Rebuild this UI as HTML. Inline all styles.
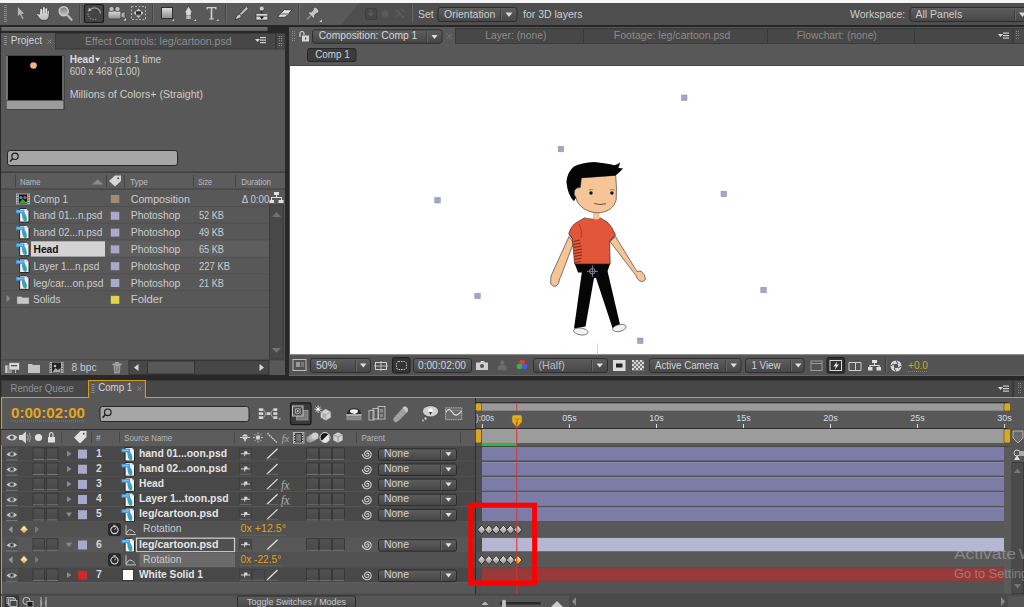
<!DOCTYPE html>
<html><head><meta charset="utf-8">
<style>
*{margin:0;padding:0;box-sizing:border-box}
html,body{width:1024px;height:607px;overflow:hidden;background:#282828}
svg{position:absolute;left:0;top:0;display:block}
text{font-family:"Liberation Sans",sans-serif;font-size:10.5px}
.b{font-weight:bold}
</style></head><body>
<svg width="1024" height="607" viewBox="0 0 1024 607">
<defs>
 <linearGradient id="btn" x1="0" y1="0" x2="0" y2="1"><stop offset="0" stop-color="#5e5e5e"/><stop offset="1" stop-color="#464646"/></linearGradient>
 <linearGradient id="ig" x1="0" y1="0" x2="0" y2="1"><stop offset="0" stop-color="#e0e0e0"/><stop offset="1" stop-color="#8a8a8a"/></linearGradient>
 <g id="psdi">
  <path d="M3.6 1H10.3L13 3.7V14.5H3.6Z" fill="#f2f2f2" stroke="#1a1a1a" stroke-width="0.9"/>
  <path d="M10.3 1V3.7H13Z" fill="#c8c8c8"/>
  <path d="M6 3.5Q9.5 5 10.5 9Q11.5 12.5 9.5 14Q7 13.5 6.3 10Q5.5 6.5 6 3.5Z" fill="#3f9fe0"/>
  <path d="M7.5 8Q9.5 10 9.8 13.2" stroke="#35b060" stroke-width="1.6" fill="none"/>
  <rect x="0" y="2.2" width="8.5" height="3.6" fill="#3d9be0"/>
  <rect x="1" y="3.2" width="6.3" height="1.4" fill="#9fd0f4" opacity="0.7"/>
 </g>
 <linearGradient id="box" x1="0" y1="0" x2="0" y2="1"><stop offset="0" stop-color="#525252"/><stop offset="1" stop-color="#474747"/></linearGradient>
 <linearGradient id="kf" x1="0" y1="0" x2="0" y2="1"><stop offset="0" stop-color="#e8e8e8"/><stop offset="1" stop-color="#8c8c8c"/></linearGradient>
 <linearGradient id="kfy" x1="0" y1="0" x2="0" y2="1"><stop offset="0" stop-color="#fff2a0"/><stop offset="1" stop-color="#e0a000"/></linearGradient>
 <linearGradient id="kfg" x1="0" y1="0" x2="0" y2="1"><stop offset="0" stop-color="#fff6d0"/><stop offset="0.5" stop-color="#f0d890"/><stop offset="1" stop-color="#b08a30"/></linearGradient>
</defs>
<g fill="#cdcdcd">
<rect width="1024" height="607" fill="#282828"/>
<!-- ============ TOP STRIP + TOOLBAR ============ -->
<rect x="0" y="0" width="1024" height="3" fill="#f6f6f6"/>
<rect x="0" y="3" width="1024" height="22" fill="#4e4e4e"/>
<path d="M0 3H359L341 25H0Z" fill="#595959"/>
<rect x="0" y="25" width="1024" height="2" fill="#262626"/>
<!-- gripper -->
<g fill="#8a8a8a"><rect x="4" y="5" width="3" height="1"/><rect x="4" y="7" width="3" height="1"/><rect x="4" y="9" width="3" height="1"/><rect x="4" y="11" width="3" height="1"/><rect x="4" y="13" width="3" height="1"/><rect x="4" y="15" width="3" height="1"/><rect x="4" y="17" width="3" height="1"/><rect x="4" y="19" width="3" height="1"/><rect x="4" y="21" width="3" height="1"/></g>
<!-- arrow -->
<path d="M17.5 6.3V17L19.8 14.8L22.3 19.6L24 18.8L21.6 14H24.9Z" fill="#b4b4b4" stroke="#404040" stroke-width="0.5"/>
<!-- hand -->
<linearGradient id="hg" x1="0" y1="0" x2="0" y2="1"><stop offset="0" stop-color="#f2f2f2"/><stop offset="1" stop-color="#b4b4b4"/></linearGradient>
<path d="M36.3 14.3Q37.3 12.8 39.3 14.2L40 9.5Q40.2 8 41.5 8.2Q42.5 8.5 42.5 9.8L42.7 7.5Q43 6.5 44.1 6.6Q45.2 6.8 45.2 8L45.3 8.5Q45.7 7.6 46.8 7.8Q47.8 8.1 47.7 9.3L47.6 11Q48 10.2 48.9 10.4Q49.8 10.8 49.6 12L48.9 16.5Q48.3 20.6 44 20.6Q41 20.6 39.6 18.8Z" fill="url(#hg)" stroke="#2a2a2a" stroke-width="0.7"/>
<path d="M42.5 9.8V13.5M45.2 8V13.2M47.6 11V13.8" stroke="#555" stroke-width="0.6"/>
<!-- magnifier -->
<linearGradient id="mg" x1="0" y1="0" x2="0" y2="1"><stop offset="0" stop-color="#7a7a7a"/><stop offset="1" stop-color="#c4c4c4"/></linearGradient>
<circle cx="63.7" cy="11.2" r="4.5" fill="url(#mg)" stroke="#c6c6c6" stroke-width="1.6"/>
<path d="M67.2 14.9L71.6 19.8" stroke="#b8b8b8" stroke-width="2.2" stroke-linecap="round"/>
<!-- separators -->
<g stroke="#454545" stroke-width="1"><path d="M79.5 4.5V23"/><path d="M152.5 4.5V23"/><path d="M225.5 4.5V23"/><path d="M298.5 4.5V23"/><path d="M411.5 4.5V23"/></g>
<g stroke="#6a6a6a" stroke-width="1"><path d="M80.5 4.5V23"/><path d="M153.5 4.5V23"/><path d="M226.5 4.5V23"/><path d="M299.5 4.5V23"/><path d="M412.5 4.5V23"/></g>
<!-- rotate selected -->
<rect x="84.5" y="4.5" width="19" height="18" rx="2" fill="#434343" stroke="#1c1c1c" stroke-width="1.2"/>
<path d="M90 9.5Q93.5 6.8 97.5 8.5Q100.5 10.5 100.5 13.5" fill="none" stroke="#9a9a9a" stroke-width="1.3"/>
<path d="M88 13.5Q88 16.5 90.5 18.5Q94 20.3 97.5 18.5" fill="none" stroke="#8a8a8a" stroke-width="1.3" stroke-dasharray="1.3 1.3"/>
<path d="M88 11.5L89 8L91.5 10.2Z" fill="#c8c8c8"/>
<!-- camera -->
<rect x="108" y="11" width="13" height="8" rx="2" fill="url(#ig)" stroke="#333" stroke-width="0.6"/>
<circle cx="111.5" cy="9" r="2.6" fill="#bdbdbd" stroke="#333" stroke-width="0.6"/>
<circle cx="117.5" cy="9" r="2.6" fill="#bdbdbd" stroke="#333" stroke-width="0.6"/>
<path d="M121 13L125 11.5V18.5L121 17Z" fill="#aaa" stroke="#333" stroke-width="0.6"/>
<path d="M123.5 20.5H126V18" fill="#ddd"/>
<!-- pan behind -->
<rect x="131.5" y="6.5" width="14" height="13" fill="none" stroke="#b0b0b0" stroke-dasharray="2 1.5"/>
<path d="M138.5 8.5L141 11H136Z M138.5 18L141 15.5H136Z M133.5 13L136 10.8V15.2Z M143.5 13L141 10.8V15.2Z" fill="#c8c8c8"/>
<rect x="136" y="12" width="5" height="2" fill="#2a2a2a"/>
<!-- rect tool -->
<rect x="161.5" y="7.5" width="11" height="11" fill="url(#ig)" stroke="#2e2e2e"/>
<path d="M172 21L174 19V21Z" fill="#ddd"/>
<!-- pen -->
<path d="M188.5 6L191.8 11.5L190.8 16H186.2L185.2 11.5Z" fill="#d6d6d6" stroke="#333" stroke-width="0.6"/>
<rect x="186.2" y="16" width="4.6" height="3" fill="#bbb"/>
<path d="M194 21L196 19V21Z" fill="#ddd"/>
<!-- T -->
<path d="M206.5 7H216.5V9.5H215.5L215 8.2H212.3V18.5H213.8V19.5H209.2V18.5H210.7V8.2H208L207.5 9.5H206.5Z" fill="#cfcfcf"/>
<path d="M216.5 21L218.5 19V21Z" fill="#ddd"/>
<!-- brush -->
<linearGradient id="brg" x1="0" y1="0" x2="1" y2="1"><stop offset="0" stop-color="#e8e8e8"/><stop offset="1" stop-color="#8a8a8a"/></linearGradient>
<path d="M246.3 6.6L248.6 8.7L241.2 15.6L239.4 13.9Z" fill="url(#brg)" stroke="#2a2a2a" stroke-width="0.6"/>
<path d="M239.2 13.7L241.5 15.9Q240.5 18.8 235 19.5Q236 15.5 239.2 13.7Z" fill="#c8c8c8" stroke="#1e1e1e" stroke-width="0.7"/>
<!-- stamp -->
<circle cx="261.7" cy="8.6" r="2.5" fill="#cfcfcf" stroke="#2a2a2a" stroke-width="0.6"/>
<rect x="260.9" y="10.8" width="1.6" height="2.8" fill="#2a2a2a"/>
<path d="M256 13.7H267.8V16.2H256Z" fill="#eeeeee" stroke="#2a2a2a" stroke-width="0.6"/>
<path d="M256 16.2H267.8V20H256Z" fill="#d8d8d8" stroke="#2a2a2a" stroke-width="0.6"/>
<path d="M259.5 16.4L261.8 19.2L264.2 16.4Z" fill="#111"/>
<!-- eraser -->
<path d="M277.3 17.2L284.2 9.8H292.2L285.3 17.2Z" fill="#f0f0f0" stroke="#222" stroke-width="0.8"/>
<path d="M279.2 15.2L281.5 12.8H289.5L287.2 15.2Z" fill="#9c9c9c"/>
<!-- pin -->
<path d="M313 7.5Q315.5 6.5 317.5 8.5Q319.5 10.5 318.5 13L316.5 13.2L314.5 15.3L314.8 17.5L313.5 18.3L308.3 13.1L309 11.8L311.3 12L313.4 10Z" fill="#c4c4c4" stroke="#2a2a2a" stroke-width="0.6"/>
<path d="M310.8 15.6L307 19.4" stroke="#9a9a9a" stroke-width="1.3"/>
<path d="M319.3 22L321.8 19.6V22Z" fill="#dedede"/>
<!-- disabled icons -->
<rect x="365.5" y="8.5" width="11" height="11" rx="1.5" fill="#474747" stroke="#3e3e3e"/>
<path d="M371 9.5V15M368.5 13L371 15.5L373.5 13" stroke="#5e5e5e" stroke-width="1.2" fill="none"/>
<circle cx="385" cy="14" r="3.6" fill="#5a5a5a"/>
<path d="M396 10L404 18M396 17L400 13M401 9L404 12" stroke="#5c5c5c" stroke-width="1.6"/>
<!-- Set / Orientation -->
<text x="418" y="18">Set</text>
<rect x="438" y="7.5" width="79" height="14" rx="2.5" fill="url(#btn)" stroke="#2c2c2c"/>
<path d="M500.5 9V20.5" stroke="#3e3e3e"/><path d="M501.5 9V20.5" stroke="#646464"/>
<text x="444" y="18">Orientation</text>
<path d="M505.5 12.5H512.5L509 17Z" fill="#d8d8d8"/>
<text x="523" y="18">for 3D layers</text>
<text x="850" y="18">Workspace:</text>
<rect x="910" y="7.5" width="120" height="14" rx="2.5" fill="url(#btn)" stroke="#2c2c2c"/>
<path d="M1014.5 9V20.5" stroke="#3e3e3e"/><path d="M1015.5 9V20.5" stroke="#646464"/>
<text x="915.5" y="18">All Panels</text>
<path d="M1019 12.5H1026L1022.5 17Z" fill="#d8d8d8"/>

<!-- ============ gray bar ============ -->
<rect x="1.5" y="27.3" width="266" height="3.5" fill="#6a6a6a"/><rect x="1.5" y="27.3" width="266" height="0.8" fill="#7a7a7a"/>

<!-- PLACEHOLDER PANELS -->
<!-- ============ PROJECT PANEL ============ -->
<rect x="1" y="33" width="284" height="342" fill="#585858"/>
<!-- tabs -->
<rect x="1" y="33" width="54" height="16" fill="#585858"/>
<rect x="55.5" y="33.5" width="220" height="15.5" fill="#474747" stroke="#393939"/>
<g fill="#8a8a8a"><rect x="4" y="36" width="3" height="1"/><rect x="4" y="38" width="3" height="1"/><rect x="4" y="40" width="3" height="1"/><rect x="4" y="42" width="3" height="1"/><rect x="4" y="44" width="3" height="1"/></g>
<text x="10.7" y="44" textLength="31.3" lengthAdjust="spacingAndGlyphs" fill="#cfd3d8">Project</text>
<path d="M47.5 39.5L51.5 43.5M51.5 39.5L47.5 43.5" stroke="#8c8c8c" stroke-width="0.9"/>
<text x="85" y="44.5" textLength="146.5" lengthAdjust="spacingAndGlyphs" fill="#8e8e8e">Effect Controls: leg/cartoon.psd</text>
<path d="M255 39H260L257.5 42Z" fill="#dcdcdc"/>
<g fill="#d0d0d0"><rect x="260" y="37" width="6" height="1.2"/><rect x="260" y="39.5" width="6" height="1.2"/><rect x="260" y="42" width="6" height="1.2"/></g>
<rect x="276.5" y="33.5" width="8.5" height="15.5" fill="#4a4a4a" stroke="#3a3a3a"/>
<g fill="#8a8a8a"><rect x="279" y="36" width="1" height="1"/><rect x="281" y="36" width="1" height="1"/><rect x="279" y="38" width="1" height="1"/><rect x="281" y="38" width="1" height="1"/><rect x="279" y="40" width="1" height="1"/><rect x="281" y="40" width="1" height="1"/><rect x="279" y="43" width="1" height="1"/><rect x="281" y="43" width="1" height="1"/><rect x="279" y="45" width="1" height="1"/><rect x="281" y="45" width="1" height="1"/></g>
<!-- thumbnail -->
<rect x="6" y="55.5" width="58.5" height="54" fill="#2e2e2e"/>
<rect x="6.5" y="56" width="57" height="44.5" fill="#000"/>
<rect x="6.5" y="56" width="1" height="44" fill="#d8d8d8"/>
<rect x="62.5" y="56" width="1" height="44" fill="#bdbdbd"/>
<rect x="6.5" y="100.5" width="57" height="8.5" fill="#9c9c9c"/>
<circle cx="33.5" cy="65.5" r="3.3" fill="#f1b57d"/>
<!-- info -->
<text x="69.7" y="62.8" class="b" textLength="24.7" lengthAdjust="spacingAndGlyphs" fill="#dcdcdc">Head</text>
<path d="M95 57.8H100L97.5 61.5Z" fill="#e4e4e4"/>
<text x="103.7" y="62.8" textLength="57.5" lengthAdjust="spacingAndGlyphs">, used 1 time</text>
<text x="69.7" y="74.7" textLength="70.3" lengthAdjust="spacingAndGlyphs">600 x 468 (1.00)</text>
<text x="69.7" y="97.7" textLength="133.3" lengthAdjust="spacingAndGlyphs">Millions of Colors+ (Straight)</text>
<!-- search -->
<rect x="7.5" y="150.5" width="170" height="15" rx="2.5" fill="#a6a6a6" stroke="#262626"/>
<circle cx="15" cy="156.3" r="3.2" fill="none" stroke="#1e1e1e" stroke-width="1.2"/>
<path d="M12.7 158.8L10 161.5" stroke="#1e1e1e" stroke-width="1.5"/>
<!-- list header -->
<rect x="1" y="171.5" width="284" height="1.2" fill="#3a3a3a"/>
<rect x="1" y="173" width="284" height="16" fill="#5c5c5c"/>
<rect x="1" y="188.5" width="284" height="1" fill="#3e3e3e"/>
<g stroke="#444"><path d="M15.5 175V187M106.5 175V187M124.5 175V187M193.5 175V187M235.5 175V187"/></g>
<g fill="#b9bcc0"><text x="20" y="184.5" textLength="20.5" lengthAdjust="spacingAndGlyphs" style="font-size:9.5px">Name</text><text x="130" y="184.5" style="font-size:9.5px" textLength="18" lengthAdjust="spacingAndGlyphs">Type</text><text x="198" y="184.5" style="font-size:9.5px" textLength="14" lengthAdjust="spacingAndGlyphs">Size</text><text x="241.2" y="184.5" style="font-size:9.5px" textLength="29.8" lengthAdjust="spacingAndGlyphs">Duration</text></g>
<path d="M92 184.5L97.5 179.5L103.5 184.5Z" fill="#8c8c8c"/>
<path d="M109 181L115 175.5H121V181L115 186.5Z" fill="#d6d6d6"/><circle cx="118.2" cy="178.2" r="1" fill="#555"/>
<!-- rows -->
<g fill="#4d4d4d"><rect x="1" y="206" width="268" height="0.8"/><rect x="1" y="222.8" width="268" height="0.8"/><rect x="1" y="239.7" width="268" height="0.8"/><rect x="1" y="256.6" width="268" height="0.8"/><rect x="1" y="273.5" width="268" height="0.8"/><rect x="1" y="290.3" width="268" height="0.8"/><rect x="1" y="307.1" width="268" height="0.8"/></g>
<rect x="1" y="240.5" width="268" height="16.2" fill="#5e5e5e"/>
<rect x="31" y="241.3" width="74" height="15.3" fill="#d3d3d3"/>
<!-- comp icon -->
<rect x="16" y="193.6" width="14" height="10.7" fill="#b8b8b8"/>
<g fill="#555"><rect x="16.8" y="194.5" width="1.2" height="1.2"/><rect x="16.8" y="197" width="1.2" height="1.2"/><rect x="16.8" y="199.5" width="1.2" height="1.2"/><rect x="16.8" y="202" width="1.2" height="1.2"/><rect x="28" y="194.5" width="1.2" height="1.2"/><rect x="28" y="197" width="1.2" height="1.2"/><rect x="28" y="199.5" width="1.2" height="1.2"/><rect x="28" y="202" width="1.2" height="1.2"/></g>
<rect x="18.8" y="194.4" width="8.4" height="9.2" fill="#151515"/><circle cx="21" cy="197.5" r="1.6" fill="#3a8ee0"/><circle cx="25" cy="197.5" r="1.6" fill="#e04a2a"/><path d="M18.8 203.6L22.5 199L26 202L27.2 201V203.6Z" fill="#2aaa3a"/>
<g fill="#cdcdcd">
<text x="33.4" y="202.5" textLength="34.5" lengthAdjust="spacingAndGlyphs">Comp 1</text>
<text x="33.4" y="219.3" textLength="69" lengthAdjust="spacingAndGlyphs">hand 01...n.psd</text>
<text x="33.4" y="236.1" textLength="69" lengthAdjust="spacingAndGlyphs">hand 02...n.psd</text>
<text x="33.4" y="269.8" textLength="66" lengthAdjust="spacingAndGlyphs">Layer 1...n.psd</text>
<text x="33.4" y="286.6" textLength="70" lengthAdjust="spacingAndGlyphs">leg/car...on.psd</text>
<text x="33" y="303.4" textLength="27.5" lengthAdjust="spacingAndGlyphs">Solids</text>
<text x="130.8" y="202.5" textLength="59" lengthAdjust="spacingAndGlyphs">Composition</text>
<text x="130.8" y="219.3" textLength="49.5" lengthAdjust="spacingAndGlyphs">Photoshop</text>
<text x="130.8" y="236.1" textLength="49.5" lengthAdjust="spacingAndGlyphs">Photoshop</text>
<text x="130.8" y="253" textLength="49.5" lengthAdjust="spacingAndGlyphs">Photoshop</text>
<text x="130.8" y="269.8" textLength="49.5" lengthAdjust="spacingAndGlyphs">Photoshop</text>
<text x="130.8" y="286.6" textLength="49.5" lengthAdjust="spacingAndGlyphs">Photoshop</text>
<text x="130.8" y="303.4" textLength="32" lengthAdjust="spacingAndGlyphs">Folder</text>
<text x="199" y="219.3" textLength="25" lengthAdjust="spacingAndGlyphs">52 KB</text>
<text x="199" y="236.1" textLength="25" lengthAdjust="spacingAndGlyphs">49 KB</text>
<text x="199" y="253" textLength="25" lengthAdjust="spacingAndGlyphs">65 KB</text>
<text x="199" y="269.8" textLength="31" lengthAdjust="spacingAndGlyphs">227 KB</text>
<text x="199" y="286.6" textLength="25" lengthAdjust="spacingAndGlyphs">21 KB</text>
<text x="241.8" y="202.5" textLength="27.5" lengthAdjust="spacingAndGlyphs">Δ 0:00</text>
</g>
<text x="33.5" y="253" class="b" fill="#111" textLength="25" lengthAdjust="spacingAndGlyphs">Head</text>
<g><rect x="110.8" y="195" width="8.5" height="8" fill="#a38a70"/>
<rect x="110.8" y="211.8" width="8.5" height="8" fill="#a9a9c9"/>
<rect x="110.8" y="228.6" width="8.5" height="8" fill="#a9a9c9"/>
<rect x="110.8" y="245.4" width="8.5" height="8" fill="#a9a9c9"/>
<rect x="110.8" y="262.2" width="8.5" height="8" fill="#a9a9c9"/>
<rect x="110.8" y="279" width="8.5" height="8" fill="#a9a9c9"/>
<rect x="110.8" y="295.8" width="8.5" height="8" fill="#e3d44a"/></g>
<!-- psd icons -->
<use href="#psdi" x="16" y="207.5"/><use href="#psdi" x="16" y="224.3"/><use href="#psdi" x="16" y="241.2"/><use href="#psdi" x="16" y="258"/><use href="#psdi" x="16" y="274.8"/>
<!-- solids folder -->
<path d="M6.5 295L10.5 298.5L6.5 302Z" fill="#8a8a8a"/>
<path d="M17 296.5H21.5L22.5 297.5H29V304H17Z" fill="#c8c8c8" stroke="#777" stroke-width="0.5"/>
<!-- flowchart icon -->
<g fill="#e0e0e0"><rect x="274" y="192" width="5" height="3"/><rect x="276" y="195" width="1" height="2"/><rect x="271" y="197" width="11" height="1"/><rect x="271" y="197" width="1" height="3"/><rect x="281" y="197" width="1" height="3"/><rect x="269.5" y="200" width="4.5" height="3"/><rect x="278.5" y="200" width="5" height="3"/></g>
<!-- v scrollbar -->
<rect x="269.5" y="205" width="14" height="154" fill="#484848" stroke="#3a3a3a"/>
<path d="M272 217L276.5 212L281 217Z" fill="#707070"/>
<path d="M272 348L276.5 353L281 348Z" fill="#707070"/>
<!-- footer -->
<rect x="1" y="359.5" width="284" height="1" fill="#3e3e3e"/>
<rect x="1" y="360.5" width="284" height="14.5" fill="#585858"/>
<g fill="#c9c9c9">
<rect x="5" y="365" width="7" height="8" fill="#9a9a9a"/><rect x="5.5" y="366" width="1.2" height="7" fill="#ddd"/><rect x="9" y="362.5" width="10.5" height="7.5" fill="#d8d8d8" stroke="#444" stroke-width="0.5"/><rect x="11" y="365" width="6" height="1.3" fill="#555"/><rect x="15" y="370" width="1" height="3" fill="#bbb"/>
<path d="M28 364H32L33 365H40V373H28Z" fill="#c2c2c2"/>
<rect x="49.5" y="362" width="14" height="11" fill="#b0b0b0"/><rect x="52" y="362.5" width="9" height="10" fill="#222"/><circle cx="55" cy="366" r="1.3" fill="#bbb"/><path d="M52.5 372L55.5 368L58 370L60.5 368V372Z" fill="#aaa"/><g fill="#444"><rect x="50.2" y="363" width="1" height="1"/><rect x="50.2" y="365.5" width="1" height="1"/><rect x="50.2" y="368" width="1" height="1"/><rect x="50.2" y="370.5" width="1" height="1"/><rect x="61.8" y="363" width="1" height="1"/><rect x="61.8" y="365.5" width="1" height="1"/><rect x="61.8" y="368" width="1" height="1"/><rect x="61.8" y="370.5" width="1" height="1"/></g>
<text x="71.5" y="371" textLength="25" lengthAdjust="spacingAndGlyphs" fill="#c6cbd0">8 bpc</text>
<path d="M113.5 365H120.5L119.8 373.5H114.2Z" fill="#9a9a9a"/><rect x="112.5" y="363.5" width="9" height="1.5" fill="#a8a8a8"/><rect x="115" y="362" width="4" height="1.5" fill="#a8a8a8"/><path d="M115.5 366.5V372M117 366.5V372M118.5 366.5V372" stroke="#6a6a6a" stroke-width="0.6"/>
</g>
<rect x="129" y="360.5" width="140" height="14" fill="#474747" stroke="#353535"/>
<rect x="147.5" y="361" width="47" height="13" fill="#585858" stroke="#333"/>
<path d="M138.5 364L134 367.5L138.5 371Z" fill="#d8d8d8"/>
<path d="M259.5 364L264 367.5L259.5 371Z" fill="#d8d8d8"/>
<!-- ============ COMP PANEL ============ -->
<rect x="289" y="27" width="735" height="349" fill="#585858"/>
<g fill="#8a8a8a"><rect x="292" y="31" width="1" height="1"/><rect x="294" y="31" width="1" height="1"/><rect x="292" y="33" width="1" height="1"/><rect x="294" y="33" width="1" height="1"/><rect x="292" y="35" width="1" height="1"/><rect x="294" y="35" width="1" height="1"/><rect x="292" y="38" width="1" height="1"/><rect x="294" y="38" width="1" height="1"/><rect x="292" y="40" width="1" height="1"/><rect x="294" y="40" width="1" height="1"/></g>
<!-- lock -->
<path d="M300 37V33.5Q300 31.5 302 31.5Q304 31.5 304 33.5V35" fill="none" stroke="#d0d0d0" stroke-width="1.2"/>
<rect x="302" y="35.5" width="7" height="6" fill="#d6d6d6"/><rect x="305" y="37.5" width="1.2" height="2" fill="#444"/>
<!-- comp dropdown tab -->
<rect x="312.5" y="29.8" width="129.5" height="13.5" rx="2.5" fill="url(#btn)" stroke="#2e2e2e"/>
<path d="M426.5 31V42.3" stroke="#3e3e3e"/><path d="M427.5 31V42.3" stroke="#666"/>
<text x="318.7" y="39.3" textLength="98.5" lengthAdjust="spacingAndGlyphs" fill="#d4d8dc">Composition: Comp 1</text>
<path d="M431.5 35H437.5L434.5 39Z" fill="#e0e0e0"/>
<path d="M446.8 33.8L451.8 38.8M451.8 33.8L446.8 38.8" stroke="#7a7a7a" stroke-width="1"/>
<!-- inactive tabs -->
<rect x="455.5" y="28.5" width="128" height="15" fill="#474747" stroke="#3a3a3a"/>
<rect x="583.5" y="28.5" width="184" height="15" fill="#474747" stroke="#3a3a3a"/>
<rect x="767.5" y="28.5" width="147" height="15" fill="#474747" stroke="#3a3a3a"/>
<rect x="914.5" y="28.5" width="98" height="15" fill="#474747" stroke="#3a3a3a"/>
<g fill="#8c8c8c">
<text x="485.3" y="39" textLength="61" lengthAdjust="spacingAndGlyphs">Layer: (none)</text>
<text x="613.8" y="39" textLength="116.7" lengthAdjust="spacingAndGlyphs">Footage: leg/cartoon.psd</text>
<text x="796.8" y="39" textLength="80" lengthAdjust="spacingAndGlyphs">Flowchart: (none)</text>
</g>
<path d="M998 34H1003L1000.5 37Z" fill="#dcdcdc"/>
<g fill="#d0d0d0"><rect x="1003" y="32.5" width="6" height="1.2"/><rect x="1003" y="35" width="6" height="1.2"/><rect x="1003" y="37.5" width="6" height="1.2"/></g>
<rect x="1013.5" y="28.5" width="11" height="15" fill="#4a4a4a" stroke="#3a3a3a"/>
<g fill="#8a8a8a"><rect x="1016" y="31" width="1" height="1"/><rect x="1018" y="31" width="1" height="1"/><rect x="1016" y="33" width="1" height="1"/><rect x="1018" y="33" width="1" height="1"/><rect x="1016" y="35" width="1" height="1"/><rect x="1018" y="35" width="1" height="1"/><rect x="1016" y="38" width="1" height="1"/><rect x="1018" y="38" width="1" height="1"/></g>
<!-- Comp 1 crumb -->
<rect x="307.5" y="48.5" width="48.5" height="13" rx="2" fill="#3c3c3c" stroke="#262626"/>
<text x="315.2" y="57.8" textLength="34.5" lengthAdjust="spacingAndGlyphs" fill="#d0d4d8">Comp 1</text>
<!-- viewer -->
<rect x="289" y="65" width="735" height="1" fill="#444"/>
<rect x="290" y="66" width="734" height="288.5" fill="#ffffff"/>
<rect x="289" y="354.5" width="735" height="1" fill="#6a6a6a"/>
<!-- footer -->
<rect x="289" y="355.5" width="735" height="20" fill="#535353"/><rect x="289" y="375" width="735" height="1" fill="#666"/>
<rect x="293" y="359.5" width="13" height="11" fill="none" stroke="#bbb"/><rect x="296" y="362" width="4" height="5" fill="#999"/><rect x="301" y="362" width="3" height="5" fill="#777"/>
<rect x="310.5" y="358.5" width="60" height="14" rx="2.5" fill="url(#btn)" stroke="#2e2e2e"/>
<path d="M355.5 360V371" stroke="#3e3e3e"/><path d="M356.5 360V371" stroke="#666"/>
<text x="316" y="368.5" textLength="21" lengthAdjust="spacingAndGlyphs" fill="#cfd4d8">50%</text>
<path d="M360 363.5H366.5L363.2 367.5Z" fill="#e0e0e0"/>
<rect x="375.5" y="362.5" width="11" height="7" fill="none" stroke="#cfcfcf"/><path d="M374 366H388M381 361V371" stroke="#cfcfcf" stroke-width="0.8"/>
<rect x="392.5" y="357.5" width="17.5" height="15.5" rx="2" fill="#353535" stroke="#1e1e1e"/>
<rect x="396.5" y="361.5" width="10" height="8" rx="2" fill="none" stroke="#c8c8c8" stroke-dasharray="1.5 1"/>
<rect x="413.5" y="358.5" width="58" height="14" rx="2.5" fill="url(#btn)" stroke="#2e2e2e"/>
<text x="418" y="368.5" textLength="48" lengthAdjust="spacingAndGlyphs" fill="#cfd4d8">0:00:02:00</text>
<path d="M476 362.5H480L481 361H484L485 362.5H488V370H476Z" fill="#cfcfcf"/><circle cx="482" cy="366" r="2" fill="#555"/>
<circle cx="502.3" cy="362.5" r="2.2" fill="#6c6c6c"/><path d="M498 370V367Q498 365 502.3 365Q506.5 365 506.5 367V370Z" fill="#6c6c6c"/>
<circle cx="522" cy="362.5" r="2.8" fill="#e03a3a"/><circle cx="519.5" cy="366.5" r="2.8" fill="#3ab04a"/><circle cx="524.5" cy="366.5" r="2.8" fill="#4a5ae0"/>
<rect x="533.5" y="358.5" width="74" height="14" rx="2.5" fill="url(#btn)" stroke="#2e2e2e"/>
<path d="M591.5 360V371" stroke="#3e3e3e"/><path d="M592.5 360V371" stroke="#666"/>
<text x="538.4" y="368.5" textLength="26.4" lengthAdjust="spacingAndGlyphs" fill="#b8bcc0">(Half)</text>
<path d="M596.5 363.5H603L599.7 367.5Z" fill="#e0e0e0"/>
<rect x="613" y="360" width="12.5" height="11" fill="#dcdcdc"/><rect x="616" y="363.5" width="6.5" height="4" fill="#222"/>
<g fill="#d8d8d8"><rect x="632" y="360" width="12" height="11" fill="#777"/><rect x="632" y="360" width="2" height="2"/><rect x="636" y="360" width="2" height="2"/><rect x="640" y="360" width="2" height="2"/><rect x="634" y="362" width="2" height="2"/><rect x="638" y="362" width="2" height="2"/><rect x="642" y="362" width="2" height="2"/><rect x="632" y="364" width="2" height="2"/><rect x="636" y="364" width="2" height="2"/><rect x="640" y="364" width="2" height="2"/><rect x="634" y="366" width="2" height="2"/><rect x="638" y="366" width="2" height="2"/><rect x="642" y="366" width="2" height="2"/><rect x="632" y="368" width="2" height="2"/><rect x="636" y="368" width="2" height="2"/><rect x="640" y="368" width="2" height="2"/></g>
<rect x="649.5" y="358.5" width="91.5" height="14" rx="2.5" fill="url(#btn)" stroke="#2e2e2e"/>
<path d="M725.5 360V371" stroke="#3e3e3e"/><path d="M726.5 360V371" stroke="#666"/>
<text x="655" y="368.5" textLength="63.7" lengthAdjust="spacingAndGlyphs" fill="#cfd4d8">Active Camera</text>
<path d="M730.5 363.5H737L733.7 367.5Z" fill="#e0e0e0"/>
<rect x="745.5" y="358.5" width="58.5" height="14" rx="2.5" fill="url(#btn)" stroke="#2e2e2e"/>
<path d="M790.5 360V371" stroke="#3e3e3e"/><path d="M791.5 360V371" stroke="#666"/>
<text x="751.4" y="368.5" textLength="29.2" lengthAdjust="spacingAndGlyphs" fill="#cfd4d8">1 View</text>
<path d="M795 363.5H801.5L798.2 367.5Z" fill="#e0e0e0"/>
<rect x="811" y="361" width="11" height="9.5" fill="none" stroke="#9a9a9a"/><path d="M811 363.5H822" stroke="#9a9a9a"/>
<rect x="827" y="357.5" width="17.5" height="15.5" rx="1.5" fill="#303030" stroke="#1e1e1e"/>
<rect x="830" y="360.5" width="11.5" height="10" fill="none" stroke="#d8d8d8"/><path d="M837 361.5L833.5 366.5H836L834.5 370L839 364.5H836.5Z" fill="#e8e8e8"/>
<path d="M849 362.5H855.5V370.5H849Z M855.5 362.5H861V370.5H855.5Z" fill="none" stroke="#cfcfcf"/>
<g fill="#e0e0e0"><rect x="872" y="360" width="5" height="3"/><rect x="874" y="363" width="1" height="2"/><rect x="869.5" y="365" width="10" height="1"/><rect x="869.5" y="365" width="1" height="2"/><rect x="878.5" y="365" width="1" height="2"/><rect x="868" y="367" width="4.5" height="3.5"/><rect x="876.5" y="367" width="4.5" height="3.5"/></g>
<path d="M885.5 359V372" stroke="#3a3a3a"/><path d="M886.5 359V372" stroke="#666"/>
<circle cx="896" cy="366" r="5.5" fill="#d8d8d8"/><circle cx="896" cy="366" r="2.3" fill="#505050"/>
<path d="M896 360.5L898 364M901.5 366L898 368M896 371.5L894 368M890.5 366L894 364" stroke="#505050" stroke-width="1"/>
<text x="908" y="369" textLength="20" lengthAdjust="spacingAndGlyphs" fill="#d8a020">+0.0</text>
<path d="M908 371.5H928" stroke="#a07a20" stroke-dasharray="1 1"/>
<!-- ============ TIMELINE ============ -->
<rect x="1" y="380" width="1023" height="17.5" fill="#3f3f3f"/>
<rect x="1.5" y="380.5" width="86" height="17" fill="#474747" stroke="#393939"/>
<text x="10.5" y="392" textLength="63.3" lengthAdjust="spacingAndGlyphs" fill="#8e9296">Render Queue</text>
<rect x="146.5" y="380.5" width="866" height="17" fill="#474747" stroke="#393939"/>
<path d="M998 387H1003L1000.5 390Z" fill="#dcdcdc"/><g fill="#d0d0d0"><rect x="1003" y="385.5" width="6" height="1.2"/><rect x="1003" y="388" width="6" height="1.2"/><rect x="1003" y="390.5" width="6" height="1.2"/></g>
<rect x="1013.5" y="380.5" width="11" height="17" fill="#4a4a4a" stroke="#393939"/>
<g fill="#8a8a8a"><rect x="1018" y="383" width="1" height="1"/><rect x="1020" y="383" width="1" height="1"/><rect x="1018" y="385" width="1" height="1"/><rect x="1020" y="385" width="1" height="1"/><rect x="1018" y="387" width="1" height="1"/><rect x="1020" y="387" width="1" height="1"/><rect x="1018" y="390" width="1" height="1"/><rect x="1020" y="390" width="1" height="1"/><rect x="1018" y="392" width="1" height="1"/><rect x="1020" y="392" width="1" height="1"/></g>
<rect x="1" y="397" width="1023" height="210" fill="#585858"/>
<rect x="88.5" y="380.5" width="57" height="18" fill="#585858"/>
<path d="M1.5 607V397.5H88.5V380.5H145.5V397.5H1024" fill="none" stroke="#d39c1c" stroke-width="1.2"/>
<g fill="#8a8a8a"><rect x="91.5" y="384" width="3" height="1"/><rect x="91.5" y="386" width="3" height="1"/><rect x="91.5" y="388" width="3" height="1"/><rect x="91.5" y="390" width="3" height="1"/><rect x="91.5" y="392" width="3" height="1"/></g>
<text x="98.2" y="391.3" textLength="34" lengthAdjust="spacingAndGlyphs" fill="#d2d6da">Comp 1</text>
<path d="M137.5 386.5L141.5 390.5M141.5 386.5L137.5 390.5" stroke="#8c8c8c" stroke-width="0.9"/>
<text x="11" y="417.8" class="b" textLength="74" lengthAdjust="spacingAndGlyphs" style="font-size:14px" fill="#e5a51c">0:00:02:00</text>
<path d="M11 421H85" stroke="#b0801c" stroke-width="0.9" stroke-dasharray="1 1"/>
<rect x="100" y="406.5" width="149" height="15" rx="2.5" fill="#a6a6a6" stroke="#262626"/>
<circle cx="107.8" cy="412.3" r="3.3" fill="none" stroke="#1e1e1e" stroke-width="1.2"/><path d="M105.4 414.8L102.6 417.6" stroke="#1e1e1e" stroke-width="1.5"/>
<g fill="#d8d8d8"><rect x="258.8" y="408.3" width="4.4" height="2.6"/><rect x="258.8" y="412.3" width="4.4" height="2.6"/><rect x="258.8" y="416.3" width="4.4" height="2.6"/><rect x="266.5" y="412.3" width="4" height="2.6"/><rect x="273.3" y="408.3" width="4" height="2.6"/><rect x="273.3" y="412.3" width="4" height="2.6"/><rect x="273.3" y="416.3" width="4" height="2.6"/></g><path d="M263.2 409.6Q265 410 265.5 413.6Q265 417 263.2 417.6M273.3 409.6Q271.5 410 271 413.6Q271.5 417 273.3 417.6" fill="none" stroke="#bbb" stroke-width="0.7"/><path d="M278.5 418.5H281L279.7 420Z" fill="#ddd"/>
<rect x="290.5" y="402.8" width="20.5" height="21.8" rx="2" fill="#3a3a3a" stroke="#1a1a1a" stroke-width="1.2"/>
<rect x="296.5" y="410.5" width="11.5" height="9.5" fill="#7a7a7a" stroke="#9a9a9a" stroke-width="0.8"/><rect x="292.5" y="406" width="10.5" height="10" fill="#4a4a4a" stroke="#d0d0d0" stroke-width="0.9"/><circle cx="297.7" cy="411" r="2.6" fill="none" stroke="#ccc" stroke-width="0.8"/><path d="M293 406.5L295.5 409M302.5 406.5L300 409M293 415.5L295.5 413M302.5 415.5L300 413" stroke="#aaa" stroke-width="0.6"/><circle cx="297.7" cy="411" r="0.9" fill="#ddd"/>
<path d="M318.1 405.5V413M314.5 409.2H321.7M315.5 406.6L320.7 411.8M320.7 406.6L315.5 411.8" stroke="#f0f0f0" stroke-width="0.8"/><circle cx="318.1" cy="409.2" r="1.3" fill="#fff"/>
<path d="M320.7 412L325.7 409L330.8 412V417.5L325.7 420.4L320.7 417.5Z" fill="#d4d4d4" stroke="#888" stroke-width="0.5"/><path d="M320.7 412L325.7 414.8L330.8 412M325.7 414.8V420.4" stroke="#8a8a8a" stroke-width="0.6" fill="none"/><rect x="322.5" y="414" width="2.5" height="4" fill="#9a9a9a" opacity="0.6"/>
<path d="M347 414Q347 408.3 354 408.3Q361 408.3 361 414Z" fill="#2a2a2a"/><path d="M350 411Q350 409.3 354 409.3Q358 409.3 358 411Q358 413 355.5 413.5L354.5 416L353.5 413.5Q350 413 350 411Z" fill="#f0f0f0"/><rect x="346.3" y="414" width="15.3" height="2.5" fill="#a8a8a8"/><rect x="346.3" y="417" width="15.3" height="3.3" fill="#8a8a8a"/>
<g fill="none" stroke="#d0d0d0" stroke-width="0.8"><rect x="369" y="410.5" width="5" height="9.5"/><rect x="373" y="408.5" width="5.5" height="10.5"/><rect x="378" y="406.5" width="7" height="12.5"/></g><rect x="379.8" y="409" width="3.4" height="3.5" fill="#888"/><rect x="379.8" y="414" width="3.4" height="3" fill="#888"/>
<path d="M394.5 417Q392 419.5 394 421.5Q396 423.5 398.5 421L407 412.5Q409 410 407 407.5Q405 405.5 402.5 408Z" fill="#a4a4a4" stroke="#666" stroke-width="0.5"/><path d="M395.5 415.5L399.5 419.5M398 413L402 417M400.5 410.5L404.5 414.5" stroke="#888" stroke-width="0.6"/><path d="M402.5 408L407 412.5Q409 410 407 407.5Q405 405.5 402.5 408Z" fill="#c8c8c8"/>
<ellipse cx="430.5" cy="411.3" rx="8" ry="5.6" fill="#d0d0d0" stroke="#333" stroke-width="0.6"/><circle cx="430.5" cy="410.5" r="2.2" fill="#fff"/><path d="M429 412L430.5 415L432 412Z" fill="#333"/><circle cx="425.5" cy="418.5" r="1.2" fill="#c8c8c8"/><circle cx="423" cy="420.5" r="0.9" fill="#c8c8c8"/>
<rect x="445.5" y="407.8" width="16.3" height="11.8" fill="#6a6a6a" stroke="#c8c8c8" stroke-width="0.8" stroke-dasharray="1.2 0.6"/><path d="M446 412Q449 407 452.5 412.5Q456 418.5 461.5 411" fill="none" stroke="#e4e4e4" stroke-width="1.2"/><path d="M445.5 410.5H461.8" stroke="#9a9a9a" stroke-width="0.5"/>
<rect x="475" y="398" width="1" height="196" fill="#2e2e2e"/>
<rect x="1" y="429" width="474" height="1" fill="#2e2e2e"/>
<rect x="1" y="430" width="474" height="15.5" fill="#5c5c5c"/>
<g stroke="#474747"><path d="M61.5 432V443M91.5 432V443M119.5 432V443M234.5 432V443M356.5 432V443M460.5 432V443"/></g>
<path d="M6 437.5Q11.8 431.5 17.6 437.5Q11.8 443.5 6 437.5Z" fill="#d0d0d0"/><circle cx="11.8" cy="437.5" r="2" fill="#555"/>
<path d="M19 435H22L26 431.5V443.5L22 440H19Z" fill="#d8d8d8"/><path d="M27.5 434.5Q29 437.5 27.5 440.5M29.3 433Q31.5 437.5 29.3 442" stroke="#bbb" stroke-width="0.8" fill="none"/>
<circle cx="38.5" cy="437.5" r="3.6" fill="#e0e0e0"/>
<path d="M49.5 437V435Q49.5 432.5 51.3 432.5Q53 432.5 53 435V437" fill="none" stroke="#d8d8d8" stroke-width="1.2"/><rect x="48" y="437" width="7" height="5.5" fill="#e0e0e0"/>
<path d="M74 439L80.5 432.5H86.5V438.5L80 445Z" fill="#e0e0e0" transform="translate(0,-1.5)"/><circle cx="83.8" cy="433.8" r="1" fill="#555"/>
<text x="96" y="441" style="font-size:8.5px" fill="#b6babe">#</text>
<text x="124.2" y="441" textLength="48" lengthAdjust="spacingAndGlyphs" style="font-size:8.5px" fill="#b6babe">Source Name</text>
<text x="361.4" y="441" textLength="23.6" lengthAdjust="spacingAndGlyphs" style="font-size:8.5px" fill="#b6babe">Parent</text>
<g fill="#d4d4d4"><path d="M240 437.5H242.5M247.5 437.5H250" stroke="#d4d4d4" stroke-width="1"/><circle cx="245" cy="436.8" r="2.6"/><path d="M244 439H246L245.5 441.5H244.5Z"/><circle cx="244" cy="436.5" r="0.6" fill="#555"/><circle cx="246" cy="436.5" r="0.6" fill="#555"/><circle cx="258" cy="437.5" r="2.2"/><path d="M258 432.5V434.3M258 440.7V442.5M253 437.5H254.8M261.2 437.5H263M254.5 434L255.7 435.2M260.3 439.8L261.5 441M261.5 434L260.3 435.2M255.7 439.8L254.5 441" stroke="#d4d4d4" stroke-width="0.8"/><path d="M267.5 433.3L277 442.7" stroke="#d4d4d4" stroke-width="1.3" stroke-dasharray="1.6 0.7"/></g>
<text x="281.5" y="442" style="font-size:11px;font-family:'Liberation Serif',serif;font-style:italic" fill="#a8a8a8">fx</text>
<rect x="293.5" y="432.5" width="10.4" height="10.5" fill="#333" stroke="#cfcfcf" stroke-width="0.8"/><rect x="296.3" y="434" width="4.8" height="7.5" fill="#777"/><g fill="#ddd"><rect x="294" y="433.5" width="1.3" height="1.2"/><rect x="294" y="436" width="1.3" height="1.2"/><rect x="294" y="438.5" width="1.3" height="1.2"/><rect x="294" y="441" width="1.3" height="1.2"/><rect x="302" y="433.5" width="1.3" height="1.2"/><rect x="302" y="436" width="1.3" height="1.2"/><rect x="302" y="438.5" width="1.3" height="1.2"/><rect x="302" y="441" width="1.3" height="1.2"/></g>
<circle cx="310" cy="439" r="3.5" fill="#9a9a9a"/><circle cx="312.5" cy="437.5" r="3.5" fill="#b0b0b0"/><circle cx="315" cy="436" r="3.5" fill="#cfcfcf"/>
<circle cx="325" cy="437.5" r="5" fill="#1a1a1a" stroke="#ddd" stroke-width="1"/><path d="M321.5 441L328.5 434Q330 437.5 328.5 441Q325 443.5 321.5 441Z" fill="#e8e8e8"/>
<path d="M333 434.5L338 432L343 434.5V440.5L338 443L333 440.5Z" fill="#cfcfcf" stroke="#444" stroke-width="0.5"/><path d="M333 434.5L338 437L343 434.5M338 437V443" stroke="#777" stroke-width="0.6" fill="none"/>
<rect x="476" y="398" width="532" height="196" fill="#585858"/>
<rect x="476" y="402" width="532" height="9.5" fill="#2e2e2e"/>
<rect x="481" y="403.3" width="523" height="7.5" fill="#9a9a9a"/>
<rect x="475.5" y="403" width="6" height="8" rx="1.5" fill="#d9a820" stroke="#333" stroke-width="0.5"/>
<rect x="1004" y="403" width="6.5" height="8" rx="1.5" fill="#d9a820" stroke="#333" stroke-width="0.5"/>
<rect x="516.3" y="403.5" width="1" height="7" fill="#d04040"/>
<rect x="476" y="411" width="532" height="17.5" fill="#585858"/>
<text x="476" y="420.5" style="font-size:9px" textLength="18" lengthAdjust="spacingAndGlyphs" fill="#d8dce0">):00s</text>
<rect x="481.9" y="424" width="1" height="4" fill="#e0e0e0"/>
<text x="569.4" y="420.5" text-anchor="middle" style="font-size:9px" fill="#d8dce0">05s</text>
<rect x="568.9" y="424" width="1" height="4" fill="#e0e0e0"/>
<text x="656.5" y="420.5" text-anchor="middle" style="font-size:9px" fill="#d8dce0">10s</text>
<rect x="656.0" y="424" width="1" height="4" fill="#e0e0e0"/>
<text x="743.5" y="420.5" text-anchor="middle" style="font-size:9px" fill="#d8dce0">15s</text>
<rect x="743.0" y="424" width="1" height="4" fill="#e0e0e0"/>
<text x="830.5" y="420.5" text-anchor="middle" style="font-size:9px" fill="#d8dce0">20s</text>
<rect x="830.0" y="424" width="1" height="4" fill="#e0e0e0"/>
<text x="917.5" y="420.5" text-anchor="middle" style="font-size:9px" fill="#d8dce0">25s</text>
<rect x="917.0" y="424" width="1" height="4" fill="#e0e0e0"/>
<text x="1004.6" y="420.5" text-anchor="middle" style="font-size:9px" fill="#d8dce0">30s</text>
<rect x="1004.1" y="424" width="1" height="4" fill="#e0e0e0"/>
<rect x="476" y="428" width="532" height="1" fill="#2e2e2e"/>
<rect x="481" y="429" width="523" height="14" fill="#9c9c9c"/>
<rect x="476" y="429" width="6" height="14" fill="#4c4c4c"/>
<rect x="475.5" y="429" width="6" height="14" rx="1.5" fill="#d9a820" stroke="#333" stroke-width="0.5"/>
<rect x="1004" y="429" width="6.5" height="14" rx="1.5" fill="#d9a820" stroke="#333" stroke-width="0.5"/>
<rect x="482" y="443" width="35" height="3" fill="#7a7a7a"/>
<rect x="482" y="443.3" width="35" height="2.2" fill="#2ebd3a"/>
<rect x="476" y="446" width="532" height="1" fill="#2a2a2a"/>
<rect x="1011" y="428" width="13" height="166" fill="#555"/>
<path d="M1013 431H1023V438L1018 443L1013 438Z" fill="#6a6a6a" stroke="#c8c8c8" stroke-width="0.8"/>
<circle cx="1017" cy="453" r="3" fill="none" stroke="#ddd" stroke-width="0.9"/><path d="M1014 460L1017 455L1020 460Z" fill="#ddd"/><rect x="1019" y="451" width="5" height="5" fill="#aaa"/>
<rect x="1011.5" y="462.5" width="12" height="131" fill="#4a4a4a" stroke="#3a3a3a"/>
<path d="M1014 473L1017.5 468.5L1021 473Z" fill="#777"/><path d="M1014 584L1017.5 588.5L1021 584Z" fill="#777"/>
<path d="M512 417Q512 415 514 415H520Q522 415 522 417V422L517 427.5L512 422Z" fill="#e0b020" stroke="#8a6a10" stroke-width="0.6"/>
<path d="M515 418L517 420.5L519 418M517 420.5V424" stroke="#8a6a10" stroke-width="0.7" fill="none"/>
<rect x="2" y="446.30" width="473" height="15.15" fill="#484848"/>
<rect x="2" y="460.70" width="473" height="0.8" fill="#5a5a5a"/>
<rect x="5.5" y="447.80" width="12.5" height="11" fill="#505050"/><path d="M6 454.30Q11.8 448.80 17.6 454.30Q11.8 459.80 6 454.30Z" fill="#cfcfcf" stroke="#444" stroke-width="0.6"/><circle cx="11.8" cy="454.10" r="2.4" fill="#7a7a7a"/><circle cx="11.8" cy="454.10" r="1" fill="#2a2a2a"/><rect x="6" y="459.50" width="11.5" height="1" fill="#7a7a7a"/>
<rect x="33" y="447.80" width="11.5" height="12" fill="url(#box)" stroke="#343434" stroke-width="0.8"/><rect x="33" y="458.90" width="11.5" height="1" fill="#7a7a7a"/>
<rect x="46.5" y="447.80" width="11.5" height="12" fill="url(#box)" stroke="#343434" stroke-width="0.8"/><rect x="46.5" y="458.90" width="11.5" height="1" fill="#7a7a7a"/>
<path d="M67 450.80L71.5 453.80L67 456.80Z" fill="#8a8a8a"/>
<rect x="78" y="449.60" width="9" height="9" fill="#a9a9cc"/>
<text x="96" y="456.60" class="b" fill="#d8d8d8">1</text>
<use href="#psdi" x="121.5" y="446.50"/>
<text x="139" y="456.60" class="b" textLength="88" lengthAdjust="spacingAndGlyphs" fill="#e4e4e4">hand 01...oon.psd</text>
<rect x="239.5" y="448.30" width="12" height="11" fill="#4a4a4a" stroke="#3a3a3a" stroke-width="0.6"/><path d="M241 453.80H250" stroke="#e0e0e0" stroke-width="0.9"/><path d="M244.3 451.30H246.3Q247.5 451.30 247.5 452.60Q247.5 453.90 246.3 453.90H245.2V456.30H244.3Z" fill="#e0e0e0"/><rect x="239.5" y="458.60" width="12" height="1" fill="#686868"/>
<path d="M267 458.80L277.5 448.80" stroke="#e4e4e4" stroke-width="1.2"/><rect x="266" y="458.60" width="12" height="1" fill="#686868"/>
<rect x="306.5" y="447.80" width="12" height="12" fill="url(#box)" stroke="#343434" stroke-width="0.8"/><rect x="306.5" y="458.90" width="12" height="1" fill="#767676"/>
<rect x="319.5" y="447.80" width="12" height="12" fill="url(#box)" stroke="#343434" stroke-width="0.8"/><rect x="319.5" y="458.90" width="12" height="1" fill="#767676"/>
<rect x="332.5" y="447.80" width="12" height="12" fill="url(#box)" stroke="#343434" stroke-width="0.8"/><rect x="332.5" y="458.90" width="12" height="1" fill="#767676"/>
<path d="M-0.40 0.00 L-0.48 -0.13 L-0.51 -0.30 L-0.49 -0.49 L-0.39 -0.68 L-0.23 -0.85 L-0.00 -0.97 L0.28 -1.03 L0.58 -1.01 L0.89 -0.89 L1.18 -0.68 L1.40 -0.38 L1.55 -0.00 L1.59 0.43 L1.51 0.87 L1.30 1.30 L0.97 1.67 L0.53 1.96 L0.00 2.12 L-0.57 2.15 L-1.16 2.01 L-1.71 1.71 L-2.17 1.25 L-2.52 0.67 L-2.70 0.00 L-2.70 -0.72 L-2.50 -1.45 L-2.11 -2.11 L-1.54 -2.67 L-0.82 -3.07 L-0.00 -3.27 L0.87 -3.26 L1.73 -3.00 L2.52 -2.52 L3.17 -1.83 L3.63 -0.97 L3.85 -0.00 L3.81 1.02 L3.50 2.02 L2.93 2.93 L2.12 3.67 L1.12 4.18 L0.00 4.42 L-1.17 4.37 L-2.31 4.00 L-3.33 3.33 L-4.16 2.40 L-4.74 1.27 L-5.00 0.00" transform="translate(367.3 454.10)" fill="none" stroke="#d0d0d0" stroke-width="1.1"/>
<rect x="378.5" y="448.80" width="78" height="11.5" rx="2" fill="url(#btn)" stroke="#2a2a2a"/>
<path d="M440.5 449.80V459.30" stroke="#3c3c3c"/><path d="M441.5 449.80V459.30" stroke="#666"/>
<text x="384" y="456.80" textLength="25" lengthAdjust="spacingAndGlyphs" fill="#d0d0d0">None</text>
<path d="M445.5 452.30H451.5L448.5 456.30Z" fill="#e4e4e4"/>
<rect x="476" y="446.30" width="535" height="15.15" fill="#4a4a4a"/>
<rect x="482" y="446.90" width="522" height="13.6" fill="#7c7ca6"/>
<rect x="476" y="460.90" width="535" height="0.7" fill="#5c5c5c"/>
<rect x="2" y="461.45" width="473" height="15.15" fill="#484848"/>
<rect x="2" y="475.85" width="473" height="0.8" fill="#5a5a5a"/>
<rect x="5.5" y="462.95" width="12.5" height="11" fill="#505050"/><path d="M6 469.45Q11.8 463.95 17.6 469.45Q11.8 474.95 6 469.45Z" fill="#cfcfcf" stroke="#444" stroke-width="0.6"/><circle cx="11.8" cy="469.25" r="2.4" fill="#7a7a7a"/><circle cx="11.8" cy="469.25" r="1" fill="#2a2a2a"/><rect x="6" y="474.65" width="11.5" height="1" fill="#7a7a7a"/>
<rect x="33" y="462.95" width="11.5" height="12" fill="url(#box)" stroke="#343434" stroke-width="0.8"/><rect x="33" y="474.05" width="11.5" height="1" fill="#7a7a7a"/>
<rect x="46.5" y="462.95" width="11.5" height="12" fill="url(#box)" stroke="#343434" stroke-width="0.8"/><rect x="46.5" y="474.05" width="11.5" height="1" fill="#7a7a7a"/>
<path d="M67 465.95L71.5 468.95L67 471.95Z" fill="#8a8a8a"/>
<rect x="78" y="464.75" width="9" height="9" fill="#a9a9cc"/>
<text x="96" y="471.75" class="b" fill="#d8d8d8">2</text>
<use href="#psdi" x="121.5" y="461.65"/>
<text x="139" y="471.75" class="b" textLength="88" lengthAdjust="spacingAndGlyphs" fill="#e4e4e4">hand 02...oon.psd</text>
<rect x="239.5" y="463.45" width="12" height="11" fill="#4a4a4a" stroke="#3a3a3a" stroke-width="0.6"/><path d="M241 468.95H250" stroke="#e0e0e0" stroke-width="0.9"/><path d="M244.3 466.45H246.3Q247.5 466.45 247.5 467.75Q247.5 469.05 246.3 469.05H245.2V471.45H244.3Z" fill="#e0e0e0"/><rect x="239.5" y="473.75" width="12" height="1" fill="#686868"/>
<path d="M267 473.95L277.5 463.95" stroke="#e4e4e4" stroke-width="1.2"/><rect x="266" y="473.75" width="12" height="1" fill="#686868"/>
<rect x="306.5" y="462.95" width="12" height="12" fill="url(#box)" stroke="#343434" stroke-width="0.8"/><rect x="306.5" y="474.05" width="12" height="1" fill="#767676"/>
<rect x="319.5" y="462.95" width="12" height="12" fill="url(#box)" stroke="#343434" stroke-width="0.8"/><rect x="319.5" y="474.05" width="12" height="1" fill="#767676"/>
<rect x="332.5" y="462.95" width="12" height="12" fill="url(#box)" stroke="#343434" stroke-width="0.8"/><rect x="332.5" y="474.05" width="12" height="1" fill="#767676"/>
<path d="M-0.40 0.00 L-0.48 -0.13 L-0.51 -0.30 L-0.49 -0.49 L-0.39 -0.68 L-0.23 -0.85 L-0.00 -0.97 L0.28 -1.03 L0.58 -1.01 L0.89 -0.89 L1.18 -0.68 L1.40 -0.38 L1.55 -0.00 L1.59 0.43 L1.51 0.87 L1.30 1.30 L0.97 1.67 L0.53 1.96 L0.00 2.12 L-0.57 2.15 L-1.16 2.01 L-1.71 1.71 L-2.17 1.25 L-2.52 0.67 L-2.70 0.00 L-2.70 -0.72 L-2.50 -1.45 L-2.11 -2.11 L-1.54 -2.67 L-0.82 -3.07 L-0.00 -3.27 L0.87 -3.26 L1.73 -3.00 L2.52 -2.52 L3.17 -1.83 L3.63 -0.97 L3.85 -0.00 L3.81 1.02 L3.50 2.02 L2.93 2.93 L2.12 3.67 L1.12 4.18 L0.00 4.42 L-1.17 4.37 L-2.31 4.00 L-3.33 3.33 L-4.16 2.40 L-4.74 1.27 L-5.00 0.00" transform="translate(367.3 469.25)" fill="none" stroke="#d0d0d0" stroke-width="1.1"/>
<rect x="378.5" y="463.95" width="78" height="11.5" rx="2" fill="url(#btn)" stroke="#2a2a2a"/>
<path d="M440.5 464.95V474.45" stroke="#3c3c3c"/><path d="M441.5 464.95V474.45" stroke="#666"/>
<text x="384" y="471.95" textLength="25" lengthAdjust="spacingAndGlyphs" fill="#d0d0d0">None</text>
<path d="M445.5 467.45H451.5L448.5 471.45Z" fill="#e4e4e4"/>
<rect x="476" y="461.45" width="535" height="15.15" fill="#4a4a4a"/>
<rect x="482" y="462.05" width="522" height="13.6" fill="#7c7ca6"/>
<rect x="476" y="476.05" width="535" height="0.7" fill="#5c5c5c"/>
<rect x="482" y="462.05" width="522" height="0.8" fill="#a2a2c4" opacity="0.6"/>
<rect x="2" y="476.60" width="473" height="15.15" fill="#484848"/>
<rect x="2" y="491.00" width="473" height="0.8" fill="#5a5a5a"/>
<rect x="5.5" y="478.10" width="12.5" height="11" fill="#505050"/><path d="M6 484.60Q11.8 479.10 17.6 484.60Q11.8 490.10 6 484.60Z" fill="#cfcfcf" stroke="#444" stroke-width="0.6"/><circle cx="11.8" cy="484.40" r="2.4" fill="#7a7a7a"/><circle cx="11.8" cy="484.40" r="1" fill="#2a2a2a"/><rect x="6" y="489.80" width="11.5" height="1" fill="#7a7a7a"/>
<rect x="33" y="478.10" width="11.5" height="12" fill="url(#box)" stroke="#343434" stroke-width="0.8"/><rect x="33" y="489.20" width="11.5" height="1" fill="#7a7a7a"/>
<rect x="46.5" y="478.10" width="11.5" height="12" fill="url(#box)" stroke="#343434" stroke-width="0.8"/><rect x="46.5" y="489.20" width="11.5" height="1" fill="#7a7a7a"/>
<path d="M67 481.10L71.5 484.10L67 487.10Z" fill="#8a8a8a"/>
<rect x="78" y="479.90" width="9" height="9" fill="#a9a9cc"/>
<text x="96" y="486.90" class="b" fill="#d8d8d8">3</text>
<use href="#psdi" x="121.5" y="476.80"/>
<text x="139" y="486.90" class="b" textLength="25" lengthAdjust="spacingAndGlyphs" fill="#e4e4e4">Head</text>
<rect x="239.5" y="478.60" width="12" height="11" fill="#4a4a4a" stroke="#3a3a3a" stroke-width="0.6"/><path d="M241 484.10H250" stroke="#e0e0e0" stroke-width="0.9"/><path d="M244.3 481.60H246.3Q247.5 481.60 247.5 482.90Q247.5 484.20 246.3 484.20H245.2V486.60H244.3Z" fill="#e0e0e0"/><rect x="239.5" y="488.90" width="12" height="1" fill="#686868"/>
<path d="M267 489.10L277.5 479.10" stroke="#e4e4e4" stroke-width="1.2"/><rect x="266" y="488.90" width="12" height="1" fill="#686868"/>
<text x="281" y="488.60" style="font-size:11.5px;font-family:'Liberation Serif',serif;font-style:italic" fill="#b4b4b4">fx</text><rect x="280" y="488.90" width="11" height="1" fill="#686868"/>
<rect x="306.5" y="478.10" width="12" height="12" fill="url(#box)" stroke="#343434" stroke-width="0.8"/><rect x="306.5" y="489.20" width="12" height="1" fill="#767676"/>
<rect x="319.5" y="478.10" width="12" height="12" fill="url(#box)" stroke="#343434" stroke-width="0.8"/><rect x="319.5" y="489.20" width="12" height="1" fill="#767676"/>
<rect x="332.5" y="478.10" width="12" height="12" fill="url(#box)" stroke="#343434" stroke-width="0.8"/><rect x="332.5" y="489.20" width="12" height="1" fill="#767676"/>
<path d="M-0.40 0.00 L-0.48 -0.13 L-0.51 -0.30 L-0.49 -0.49 L-0.39 -0.68 L-0.23 -0.85 L-0.00 -0.97 L0.28 -1.03 L0.58 -1.01 L0.89 -0.89 L1.18 -0.68 L1.40 -0.38 L1.55 -0.00 L1.59 0.43 L1.51 0.87 L1.30 1.30 L0.97 1.67 L0.53 1.96 L0.00 2.12 L-0.57 2.15 L-1.16 2.01 L-1.71 1.71 L-2.17 1.25 L-2.52 0.67 L-2.70 0.00 L-2.70 -0.72 L-2.50 -1.45 L-2.11 -2.11 L-1.54 -2.67 L-0.82 -3.07 L-0.00 -3.27 L0.87 -3.26 L1.73 -3.00 L2.52 -2.52 L3.17 -1.83 L3.63 -0.97 L3.85 -0.00 L3.81 1.02 L3.50 2.02 L2.93 2.93 L2.12 3.67 L1.12 4.18 L0.00 4.42 L-1.17 4.37 L-2.31 4.00 L-3.33 3.33 L-4.16 2.40 L-4.74 1.27 L-5.00 0.00" transform="translate(367.3 484.40)" fill="none" stroke="#d0d0d0" stroke-width="1.1"/>
<rect x="378.5" y="479.10" width="78" height="11.5" rx="2" fill="url(#btn)" stroke="#2a2a2a"/>
<path d="M440.5 480.10V489.60" stroke="#3c3c3c"/><path d="M441.5 480.10V489.60" stroke="#666"/>
<text x="384" y="487.10" textLength="25" lengthAdjust="spacingAndGlyphs" fill="#d0d0d0">None</text>
<path d="M445.5 482.60H451.5L448.5 486.60Z" fill="#e4e4e4"/>
<rect x="476" y="476.60" width="535" height="15.15" fill="#4a4a4a"/>
<rect x="482" y="477.20" width="522" height="13.6" fill="#7c7ca6"/>
<rect x="476" y="491.20" width="535" height="0.7" fill="#5c5c5c"/>
<rect x="482" y="477.20" width="522" height="0.8" fill="#a2a2c4" opacity="0.6"/>
<rect x="2" y="491.75" width="473" height="15.15" fill="#484848"/>
<rect x="2" y="506.15" width="473" height="0.8" fill="#5a5a5a"/>
<rect x="5.5" y="493.25" width="12.5" height="11" fill="#505050"/><path d="M6 499.75Q11.8 494.25 17.6 499.75Q11.8 505.25 6 499.75Z" fill="#cfcfcf" stroke="#444" stroke-width="0.6"/><circle cx="11.8" cy="499.55" r="2.4" fill="#7a7a7a"/><circle cx="11.8" cy="499.55" r="1" fill="#2a2a2a"/><rect x="6" y="504.95" width="11.5" height="1" fill="#7a7a7a"/>
<rect x="33" y="493.25" width="11.5" height="12" fill="url(#box)" stroke="#343434" stroke-width="0.8"/><rect x="33" y="504.35" width="11.5" height="1" fill="#7a7a7a"/>
<rect x="46.5" y="493.25" width="11.5" height="12" fill="url(#box)" stroke="#343434" stroke-width="0.8"/><rect x="46.5" y="504.35" width="11.5" height="1" fill="#7a7a7a"/>
<path d="M67 496.25L71.5 499.25L67 502.25Z" fill="#8a8a8a"/>
<rect x="78" y="495.05" width="9" height="9" fill="#a9a9cc"/>
<text x="96" y="502.05" class="b" fill="#d8d8d8">4</text>
<use href="#psdi" x="121.5" y="491.95"/>
<text x="139" y="502.05" class="b" textLength="89.7" lengthAdjust="spacingAndGlyphs" fill="#e4e4e4">Layer 1...toon.psd</text>
<rect x="239.5" y="493.75" width="12" height="11" fill="#4a4a4a" stroke="#3a3a3a" stroke-width="0.6"/><path d="M241 499.25H250" stroke="#e0e0e0" stroke-width="0.9"/><path d="M244.3 496.75H246.3Q247.5 496.75 247.5 498.05Q247.5 499.35 246.3 499.35H245.2V501.75H244.3Z" fill="#e0e0e0"/><rect x="239.5" y="504.05" width="12" height="1" fill="#686868"/>
<path d="M267 504.25L277.5 494.25" stroke="#e4e4e4" stroke-width="1.2"/><rect x="266" y="504.05" width="12" height="1" fill="#686868"/>
<text x="281" y="503.75" style="font-size:11.5px;font-family:'Liberation Serif',serif;font-style:italic" fill="#b4b4b4">fx</text><rect x="280" y="504.05" width="11" height="1" fill="#686868"/>
<rect x="306.5" y="493.25" width="12" height="12" fill="url(#box)" stroke="#343434" stroke-width="0.8"/><rect x="306.5" y="504.35" width="12" height="1" fill="#767676"/>
<rect x="319.5" y="493.25" width="12" height="12" fill="url(#box)" stroke="#343434" stroke-width="0.8"/><rect x="319.5" y="504.35" width="12" height="1" fill="#767676"/>
<rect x="332.5" y="493.25" width="12" height="12" fill="url(#box)" stroke="#343434" stroke-width="0.8"/><rect x="332.5" y="504.35" width="12" height="1" fill="#767676"/>
<path d="M-0.40 0.00 L-0.48 -0.13 L-0.51 -0.30 L-0.49 -0.49 L-0.39 -0.68 L-0.23 -0.85 L-0.00 -0.97 L0.28 -1.03 L0.58 -1.01 L0.89 -0.89 L1.18 -0.68 L1.40 -0.38 L1.55 -0.00 L1.59 0.43 L1.51 0.87 L1.30 1.30 L0.97 1.67 L0.53 1.96 L0.00 2.12 L-0.57 2.15 L-1.16 2.01 L-1.71 1.71 L-2.17 1.25 L-2.52 0.67 L-2.70 0.00 L-2.70 -0.72 L-2.50 -1.45 L-2.11 -2.11 L-1.54 -2.67 L-0.82 -3.07 L-0.00 -3.27 L0.87 -3.26 L1.73 -3.00 L2.52 -2.52 L3.17 -1.83 L3.63 -0.97 L3.85 -0.00 L3.81 1.02 L3.50 2.02 L2.93 2.93 L2.12 3.67 L1.12 4.18 L0.00 4.42 L-1.17 4.37 L-2.31 4.00 L-3.33 3.33 L-4.16 2.40 L-4.74 1.27 L-5.00 0.00" transform="translate(367.3 499.55)" fill="none" stroke="#d0d0d0" stroke-width="1.1"/>
<rect x="378.5" y="494.25" width="78" height="11.5" rx="2" fill="url(#btn)" stroke="#2a2a2a"/>
<path d="M440.5 495.25V504.75" stroke="#3c3c3c"/><path d="M441.5 495.25V504.75" stroke="#666"/>
<text x="384" y="502.25" textLength="25" lengthAdjust="spacingAndGlyphs" fill="#d0d0d0">None</text>
<path d="M445.5 497.75H451.5L448.5 501.75Z" fill="#e4e4e4"/>
<rect x="476" y="491.75" width="535" height="15.15" fill="#4a4a4a"/>
<rect x="482" y="492.35" width="522" height="13.6" fill="#7c7ca6"/>
<rect x="476" y="506.35" width="535" height="0.7" fill="#5c5c5c"/>
<rect x="482" y="492.35" width="522" height="0.8" fill="#a2a2c4" opacity="0.6"/>
<rect x="2" y="506.90" width="473" height="15.15" fill="#484848"/>
<rect x="2" y="521.30" width="473" height="0.8" fill="#5a5a5a"/>
<rect x="5.5" y="508.40" width="12.5" height="11" fill="#505050"/><path d="M6 514.90Q11.8 509.40 17.6 514.90Q11.8 520.40 6 514.90Z" fill="#cfcfcf" stroke="#444" stroke-width="0.6"/><circle cx="11.8" cy="514.70" r="2.4" fill="#7a7a7a"/><circle cx="11.8" cy="514.70" r="1" fill="#2a2a2a"/><rect x="6" y="520.10" width="11.5" height="1" fill="#7a7a7a"/>
<rect x="33" y="508.40" width="11.5" height="12" fill="url(#box)" stroke="#343434" stroke-width="0.8"/><rect x="33" y="519.50" width="11.5" height="1" fill="#7a7a7a"/>
<rect x="46.5" y="508.40" width="11.5" height="12" fill="url(#box)" stroke="#343434" stroke-width="0.8"/><rect x="46.5" y="519.50" width="11.5" height="1" fill="#7a7a7a"/>
<path d="M66 512.40H72L69 516.90Z" fill="#8a8a8a"/>
<rect x="78" y="510.20" width="9" height="9" fill="#a9a9cc"/>
<text x="96" y="517.20" class="b" fill="#d8d8d8">5</text>
<use href="#psdi" x="121.5" y="507.10"/>
<text x="139" y="517.20" class="b" textLength="79.5" lengthAdjust="spacingAndGlyphs" fill="#e4e4e4">leg/cartoon.psd</text>
<rect x="239.5" y="508.90" width="12" height="11" fill="#4a4a4a" stroke="#3a3a3a" stroke-width="0.6"/><path d="M241 514.40H250" stroke="#e0e0e0" stroke-width="0.9"/><path d="M244.3 511.90H246.3Q247.5 511.90 247.5 513.20Q247.5 514.50 246.3 514.50H245.2V516.90H244.3Z" fill="#e0e0e0"/><rect x="239.5" y="519.20" width="12" height="1" fill="#686868"/>
<path d="M267 519.40L277.5 509.40" stroke="#e4e4e4" stroke-width="1.2"/><rect x="266" y="519.20" width="12" height="1" fill="#686868"/>
<rect x="306.5" y="508.40" width="12" height="12" fill="url(#box)" stroke="#343434" stroke-width="0.8"/><rect x="306.5" y="519.50" width="12" height="1" fill="#767676"/>
<rect x="319.5" y="508.40" width="12" height="12" fill="url(#box)" stroke="#343434" stroke-width="0.8"/><rect x="319.5" y="519.50" width="12" height="1" fill="#767676"/>
<rect x="332.5" y="508.40" width="12" height="12" fill="url(#box)" stroke="#343434" stroke-width="0.8"/><rect x="332.5" y="519.50" width="12" height="1" fill="#767676"/>
<path d="M-0.40 0.00 L-0.48 -0.13 L-0.51 -0.30 L-0.49 -0.49 L-0.39 -0.68 L-0.23 -0.85 L-0.00 -0.97 L0.28 -1.03 L0.58 -1.01 L0.89 -0.89 L1.18 -0.68 L1.40 -0.38 L1.55 -0.00 L1.59 0.43 L1.51 0.87 L1.30 1.30 L0.97 1.67 L0.53 1.96 L0.00 2.12 L-0.57 2.15 L-1.16 2.01 L-1.71 1.71 L-2.17 1.25 L-2.52 0.67 L-2.70 0.00 L-2.70 -0.72 L-2.50 -1.45 L-2.11 -2.11 L-1.54 -2.67 L-0.82 -3.07 L-0.00 -3.27 L0.87 -3.26 L1.73 -3.00 L2.52 -2.52 L3.17 -1.83 L3.63 -0.97 L3.85 -0.00 L3.81 1.02 L3.50 2.02 L2.93 2.93 L2.12 3.67 L1.12 4.18 L0.00 4.42 L-1.17 4.37 L-2.31 4.00 L-3.33 3.33 L-4.16 2.40 L-4.74 1.27 L-5.00 0.00" transform="translate(367.3 514.70)" fill="none" stroke="#d0d0d0" stroke-width="1.1"/>
<rect x="378.5" y="509.40" width="78" height="11.5" rx="2" fill="url(#btn)" stroke="#2a2a2a"/>
<path d="M440.5 510.40V519.90" stroke="#3c3c3c"/><path d="M441.5 510.40V519.90" stroke="#666"/>
<text x="384" y="517.40" textLength="25" lengthAdjust="spacingAndGlyphs" fill="#d0d0d0">None</text>
<path d="M445.5 512.90H451.5L448.5 516.90Z" fill="#e4e4e4"/>
<rect x="476" y="506.90" width="535" height="15.15" fill="#4a4a4a"/>
<rect x="482" y="507.50" width="522" height="13.6" fill="#7c7ca6"/>
<rect x="476" y="521.50" width="535" height="0.7" fill="#5c5c5c"/>
<rect x="482" y="507.50" width="522" height="0.8" fill="#a2a2c4" opacity="0.6"/>
<rect x="2" y="522.05" width="473" height="15.15" fill="#515151"/>
<rect x="2" y="536.45" width="473" height="0.8" fill="#555"/>
<path d="M12.5 526.05L8.5 529.55L12.5 533.05Z" fill="#9a9a9a"/>
<path d="M24 525.05L28 529.55L24 534.05L20 529.55Z" fill="url(#kfg)" stroke="#4a3a20" stroke-width="0.7"/>
<path d="M35 526.05L39 529.55L35 533.05Z" fill="#7a7a7a"/>
<rect x="108.5" y="523.55" width="12" height="12" rx="2" fill="#2a2a2a" stroke="#1a1a1a" stroke-width="0.6"/><circle cx="114.5" cy="530.05" r="3.6" fill="none" stroke="#d8d8d8" stroke-width="1.1"/><path d="M114.5 530.05L116 528.05M113.3 525.35H115.7" stroke="#d8d8d8" stroke-width="0.9"/>
<path d="M126 525.05V534.55H136M126.5 533.55Q129 526.05 135 533.05" fill="none" stroke="#cfcfcf" stroke-width="0.9"/>
<text x="143" y="532.35" textLength="38.4" lengthAdjust="spacingAndGlyphs" fill="#c8ccd0">Rotation</text>
<text x="240.5" y="532.35" textLength="45.5" lengthAdjust="spacingAndGlyphs" fill="#e0a21e">0x +12.5°</text>
<path d="M240.5 535.25H286.0" stroke="#a87a18" stroke-width="0.8" stroke-dasharray="1 1"/>
<rect x="476" y="522.05" width="535" height="15.15" fill="#585858"/>
<rect x="476" y="536.65" width="535" height="0.7" fill="#595959"/>
<rect x="2" y="537.20" width="473" height="15.15" fill="#575757"/>
<rect x="2" y="551.60" width="473" height="0.8" fill="#5a5a5a"/>
<rect x="5.5" y="538.70" width="12.5" height="11" fill="#505050"/><path d="M6 545.20Q11.8 539.70 17.6 545.20Q11.8 550.70 6 545.20Z" fill="#cfcfcf" stroke="#444" stroke-width="0.6"/><circle cx="11.8" cy="545.00" r="2.4" fill="#7a7a7a"/><circle cx="11.8" cy="545.00" r="1" fill="#2a2a2a"/><rect x="6" y="550.40" width="11.5" height="1" fill="#7a7a7a"/>
<rect x="33" y="538.70" width="11.5" height="12" fill="url(#box)" stroke="#343434" stroke-width="0.8"/><rect x="33" y="549.80" width="11.5" height="1" fill="#7a7a7a"/>
<rect x="46.5" y="538.70" width="11.5" height="12" fill="url(#box)" stroke="#343434" stroke-width="0.8"/><rect x="46.5" y="549.80" width="11.5" height="1" fill="#7a7a7a"/>
<path d="M66 542.70H72L69 547.20Z" fill="#8a8a8a"/>
<rect x="78" y="540.50" width="9" height="9" fill="#a9a9cc"/>
<text x="96" y="547.50" class="b" fill="#d8d8d8">6</text>
<use href="#psdi" x="121.5" y="537.40"/>
<rect x="136.5" y="538.20" width="98" height="13.5" fill="#4f4f4f" stroke="#cfcfcf" stroke-width="1.2"/>
<text x="139" y="547.50" class="b" textLength="79.5" lengthAdjust="spacingAndGlyphs" fill="#e4e4e4">leg/cartoon.psd</text>
<rect x="239.5" y="539.20" width="12" height="11" fill="#4a4a4a" stroke="#3a3a3a" stroke-width="0.6"/><path d="M241 544.70H250" stroke="#e0e0e0" stroke-width="0.9"/><path d="M244.3 542.20H246.3Q247.5 542.20 247.5 543.50Q247.5 544.80 246.3 544.80H245.2V547.20H244.3Z" fill="#e0e0e0"/><rect x="239.5" y="549.50" width="12" height="1" fill="#686868"/>
<path d="M267 549.70L277.5 539.70" stroke="#e4e4e4" stroke-width="1.2"/><rect x="266" y="549.50" width="12" height="1" fill="#686868"/>
<rect x="306.5" y="538.70" width="12" height="12" fill="url(#box)" stroke="#343434" stroke-width="0.8"/><rect x="306.5" y="549.80" width="12" height="1" fill="#767676"/>
<rect x="319.5" y="538.70" width="12" height="12" fill="url(#box)" stroke="#343434" stroke-width="0.8"/><rect x="319.5" y="549.80" width="12" height="1" fill="#767676"/>
<rect x="332.5" y="538.70" width="12" height="12" fill="url(#box)" stroke="#343434" stroke-width="0.8"/><rect x="332.5" y="549.80" width="12" height="1" fill="#767676"/>
<path d="M-0.40 0.00 L-0.48 -0.13 L-0.51 -0.30 L-0.49 -0.49 L-0.39 -0.68 L-0.23 -0.85 L-0.00 -0.97 L0.28 -1.03 L0.58 -1.01 L0.89 -0.89 L1.18 -0.68 L1.40 -0.38 L1.55 -0.00 L1.59 0.43 L1.51 0.87 L1.30 1.30 L0.97 1.67 L0.53 1.96 L0.00 2.12 L-0.57 2.15 L-1.16 2.01 L-1.71 1.71 L-2.17 1.25 L-2.52 0.67 L-2.70 0.00 L-2.70 -0.72 L-2.50 -1.45 L-2.11 -2.11 L-1.54 -2.67 L-0.82 -3.07 L-0.00 -3.27 L0.87 -3.26 L1.73 -3.00 L2.52 -2.52 L3.17 -1.83 L3.63 -0.97 L3.85 -0.00 L3.81 1.02 L3.50 2.02 L2.93 2.93 L2.12 3.67 L1.12 4.18 L0.00 4.42 L-1.17 4.37 L-2.31 4.00 L-3.33 3.33 L-4.16 2.40 L-4.74 1.27 L-5.00 0.00" transform="translate(367.3 545.00)" fill="none" stroke="#d0d0d0" stroke-width="1.1"/>
<rect x="378.5" y="539.70" width="78" height="11.5" rx="2" fill="url(#btn)" stroke="#2a2a2a"/>
<path d="M440.5 540.70V550.20" stroke="#3c3c3c"/><path d="M441.5 540.70V550.20" stroke="#666"/>
<text x="384" y="547.70" textLength="25" lengthAdjust="spacingAndGlyphs" fill="#d0d0d0">None</text>
<path d="M445.5 543.20H451.5L448.5 547.20Z" fill="#e4e4e4"/>
<rect x="476" y="537.20" width="535" height="15.15" fill="#4a4a4a"/>
<rect x="482" y="537.80" width="522" height="13.6" fill="#b6b6d0"/>
<rect x="476" y="551.80" width="535" height="0.7" fill="#5c5c5c"/>
<rect x="2" y="552.35" width="473" height="15.15" fill="#515151"/>
<rect x="2" y="566.75" width="473" height="0.8" fill="#555"/>
<path d="M12.5 556.35L8.5 559.85L12.5 563.35Z" fill="#9a9a9a"/>
<path d="M24 555.35L28 559.85L24 564.35L20 559.85Z" fill="url(#kfg)" stroke="#4a3a20" stroke-width="0.7"/>
<path d="M35 556.35L39 559.85L35 563.35Z" fill="#7a7a7a"/>
<rect x="108.5" y="553.85" width="12" height="12" rx="2" fill="#2a2a2a" stroke="#1a1a1a" stroke-width="0.6"/><circle cx="114.5" cy="560.35" r="3.6" fill="none" stroke="#d8d8d8" stroke-width="1.1"/><path d="M114.5 560.35L116 558.35M113.3 555.65H115.7" stroke="#d8d8d8" stroke-width="0.9"/>
<path d="M126 555.35V564.85H136M126.5 563.85Q129 556.35 135 563.35" fill="none" stroke="#cfcfcf" stroke-width="0.9"/>
<rect x="139.5" y="553.05" width="95.5" height="14" fill="#6a6a6a"/>
<text x="143" y="562.65" textLength="38.4" lengthAdjust="spacingAndGlyphs" fill="#c8ccd0">Rotation</text>
<text x="240.5" y="562.65" textLength="40.8" lengthAdjust="spacingAndGlyphs" fill="#e0a21e">0x -22.5°</text>
<path d="M240.5 565.55H281.3" stroke="#a87a18" stroke-width="0.8" stroke-dasharray="1 1"/>
<rect x="476" y="552.35" width="535" height="15.15" fill="#585858"/>
<rect x="476" y="566.95" width="535" height="0.7" fill="#595959"/>
<rect x="2" y="567.50" width="473" height="15.15" fill="#484848"/>
<rect x="2" y="581.90" width="473" height="0.8" fill="#5a5a5a"/>
<rect x="5.5" y="569.00" width="12.5" height="11" fill="#505050"/><path d="M6 575.50Q11.8 570.00 17.6 575.50Q11.8 581.00 6 575.50Z" fill="#cfcfcf" stroke="#444" stroke-width="0.6"/><circle cx="11.8" cy="575.30" r="2.4" fill="#7a7a7a"/><circle cx="11.8" cy="575.30" r="1" fill="#2a2a2a"/><rect x="6" y="580.70" width="11.5" height="1" fill="#7a7a7a"/>
<rect x="33" y="569.00" width="11.5" height="12" fill="url(#box)" stroke="#343434" stroke-width="0.8"/><rect x="33" y="580.10" width="11.5" height="1" fill="#7a7a7a"/>
<rect x="46.5" y="569.00" width="11.5" height="12" fill="url(#box)" stroke="#343434" stroke-width="0.8"/><rect x="46.5" y="580.10" width="11.5" height="1" fill="#7a7a7a"/>
<path d="M67 572.00L71.5 575.00L67 578.00Z" fill="#8a8a8a"/>
<rect x="78" y="570.80" width="9" height="9" fill="#d02828"/>
<text x="96" y="577.80" class="b" fill="#d8d8d8">7</text>
<rect x="122.5" y="569.50" width="11" height="11" fill="#fff" stroke="#222" stroke-width="0.8"/>
<text x="139" y="577.80" class="b" textLength="64" lengthAdjust="spacingAndGlyphs" fill="#e4e4e4">White Solid 1</text>
<rect x="239.5" y="569.50" width="12" height="11" fill="#4a4a4a" stroke="#3a3a3a" stroke-width="0.6"/><path d="M241 575.00H250" stroke="#e0e0e0" stroke-width="0.9"/><path d="M244.3 572.50H246.3Q247.5 572.50 247.5 573.80Q247.5 575.10 246.3 575.10H245.2V577.50H244.3Z" fill="#e0e0e0"/><rect x="239.5" y="579.80" width="12" height="1" fill="#686868"/>
<rect x="252.5" y="569.50" width="12" height="11" fill="#4a4a4a" stroke="#3a3a3a" stroke-width="0.6"/><rect x="252.5" y="579.80" width="12" height="1" fill="#686868"/>
<path d="M267 580.00L277.5 570.00" stroke="#e4e4e4" stroke-width="1.2"/><rect x="266" y="579.80" width="12" height="1" fill="#686868"/>
<rect x="306.5" y="569.00" width="12" height="12" fill="url(#box)" stroke="#343434" stroke-width="0.8"/><rect x="306.5" y="580.10" width="12" height="1" fill="#767676"/>
<rect x="319.5" y="569.00" width="12" height="12" fill="url(#box)" stroke="#343434" stroke-width="0.8"/><rect x="319.5" y="580.10" width="12" height="1" fill="#767676"/>
<rect x="332.5" y="569.00" width="12" height="12" fill="url(#box)" stroke="#343434" stroke-width="0.8"/><rect x="332.5" y="580.10" width="12" height="1" fill="#767676"/>
<path d="M-0.40 0.00 L-0.48 -0.13 L-0.51 -0.30 L-0.49 -0.49 L-0.39 -0.68 L-0.23 -0.85 L-0.00 -0.97 L0.28 -1.03 L0.58 -1.01 L0.89 -0.89 L1.18 -0.68 L1.40 -0.38 L1.55 -0.00 L1.59 0.43 L1.51 0.87 L1.30 1.30 L0.97 1.67 L0.53 1.96 L0.00 2.12 L-0.57 2.15 L-1.16 2.01 L-1.71 1.71 L-2.17 1.25 L-2.52 0.67 L-2.70 0.00 L-2.70 -0.72 L-2.50 -1.45 L-2.11 -2.11 L-1.54 -2.67 L-0.82 -3.07 L-0.00 -3.27 L0.87 -3.26 L1.73 -3.00 L2.52 -2.52 L3.17 -1.83 L3.63 -0.97 L3.85 -0.00 L3.81 1.02 L3.50 2.02 L2.93 2.93 L2.12 3.67 L1.12 4.18 L0.00 4.42 L-1.17 4.37 L-2.31 4.00 L-3.33 3.33 L-4.16 2.40 L-4.74 1.27 L-5.00 0.00" transform="translate(367.3 575.30)" fill="none" stroke="#d0d0d0" stroke-width="1.1"/>
<rect x="378.5" y="570.00" width="78" height="11.5" rx="2" fill="url(#btn)" stroke="#2a2a2a"/>
<path d="M440.5 571.00V580.50" stroke="#3c3c3c"/><path d="M441.5 571.00V580.50" stroke="#666"/>
<text x="384" y="578.00" textLength="25" lengthAdjust="spacingAndGlyphs" fill="#d0d0d0">None</text>
<path d="M445.5 573.50H451.5L448.5 577.50Z" fill="#e4e4e4"/>
<rect x="476" y="567.50" width="535" height="15.15" fill="#4a4a4a"/>
<rect x="482" y="568.10" width="522" height="13.6" fill="#963a3a"/>
<rect x="476" y="582.10" width="535" height="0.7" fill="#5c5c5c"/>
<rect x="2" y="582.65" width="473" height="11.35" fill="#575757"/><rect x="2" y="582.35" width="473" height="1" fill="#616161"/>
<rect x="476" y="582.65" width="535" height="11.35" fill="#535353"/>
<rect x="476" y="447" width="6" height="147" fill="#4e4e4e" opacity="0.6"/>
<rect x="1004" y="447" width="7.5" height="147" fill="#5a5a5a"/>
<path d="M481.6 525.15L485.8 529.75L481.6 534.35L477.4 529.75Z" fill="url(#kf)" stroke="#303030" stroke-width="1"/>
<path d="M488.9 525.15L493.1 529.75L488.9 534.35L484.7 529.75Z" fill="url(#kf)" stroke="#303030" stroke-width="1"/>
<path d="M496.1 525.15L500.3 529.75L496.1 534.35L491.9 529.75Z" fill="url(#kf)" stroke="#303030" stroke-width="1"/>
<path d="M503.4 525.15L507.6 529.75L503.4 534.35L499.2 529.75Z" fill="url(#kf)" stroke="#303030" stroke-width="1"/>
<path d="M510.6 525.15L514.8 529.75L510.6 534.35L506.4 529.75Z" fill="url(#kf)" stroke="#303030" stroke-width="1"/>
<path d="M517.9 525.15L522.1 529.75L517.9 534.35L513.6 529.75Z" fill="url(#kf)" stroke="#303030" stroke-width="1"/>
<path d="M481.6 555.45L485.8 560.05L481.6 564.65L477.4 560.05Z" fill="url(#kf)" stroke="#303030" stroke-width="1"/>
<path d="M488.9 555.45L493.1 560.05L488.9 564.65L484.7 560.05Z" fill="url(#kf)" stroke="#303030" stroke-width="1"/>
<path d="M496.1 555.45L500.3 560.05L496.1 564.65L491.9 560.05Z" fill="url(#kf)" stroke="#303030" stroke-width="1"/>
<path d="M503.4 555.45L507.6 560.05L503.4 564.65L499.2 560.05Z" fill="url(#kf)" stroke="#303030" stroke-width="1"/>
<path d="M510.6 555.45L514.8 560.05L510.6 564.65L506.4 560.05Z" fill="url(#kf)" stroke="#303030" stroke-width="1"/>
<path d="M517.9 555.45L522.1 560.05L517.9 564.65L513.6 560.05Z" fill="url(#kfy)" stroke="#303030" stroke-width="1"/>
<rect x="516.3" y="422" width="1" height="172" fill="#e03030"/>
<rect x="470.8" y="505.2" width="63.8" height="77.7" fill="none" stroke="#ff0000" stroke-width="5"/>
<rect x="1" y="593.8" width="1023" height="2" fill="#474747"/>
<rect x="2" y="595.8" width="1022" height="11.2" fill="#555555"/>
<rect x="5" y="596" width="13.5" height="12" rx="1.5" fill="#3a3a3a" stroke="#222" stroke-width="0.6"/><rect x="7" y="597.5" width="7" height="6" fill="none" stroke="#cfcfcf" stroke-width="0.8"/><rect x="8.5" y="599" width="7" height="6" fill="#444" stroke="#cfcfcf" stroke-width="0.8"/><rect x="10" y="600.5" width="7" height="6" fill="#444" stroke="#cfcfcf" stroke-width="0.8"/>
<circle cx="26.5" cy="601" r="3.6" fill="none" stroke="#cfcfcf" stroke-width="0.9"/><rect x="27" y="601.5" width="6" height="5.5" fill="#1a1a1a" stroke="#cfcfcf" stroke-width="0.7"/>
<path d="M41 597V607M46 597V607M40 600.5Q43.5 603 40 605.5M47 600.5Q43.5 603 47 605.5" stroke="#bbb" stroke-width="0.9" fill="none"/>
<rect x="237.5" y="596" width="118" height="12" rx="2" fill="url(#btn)" stroke="#2a2a2a"/>
<text x="247" y="605.3" textLength="99" lengthAdjust="spacingAndGlyphs" style="font-size:9.5px" fill="#c8ccd0">Toggle Switches / Modes</text>
<path d="M481.5 605L485 601.5L488.5 605Z" fill="#bbb"/>
<rect x="500" y="602" width="41" height="2.5" rx="1" fill="#2a2a2a"/><path d="M502 607V601Q504 598.5 506 601V607Z" fill="#bbb"/>
<path d="M551 607L557 601L563 607Z" fill="#ccc"/>
<rect x="569" y="594.5" width="439" height="12.5" fill="#4a4a4a"/>
<path d="M576 597L572 601.5L576 606Z" fill="#8a8a8a"/><path d="M1001 597L1005 601.5L1001 606Z" fill="#8a8a8a"/>
<g opacity="0.42" fill="#c8c8c8"><text x="954" y="558.7" style="font-size:14.5px" textLength="62" lengthAdjust="spacingAndGlyphs">Activate</text><text x="1019" y="558.7" style="font-size:14.5px">W</text>
<text x="954" y="577.6" style="font-size:12.5px" textLength="50.3" lengthAdjust="spacingAndGlyphs">Go to Se</text><text x="1004.3" y="577.6" style="font-size:12.5px">ttings</text></g>
<!-- ============ CHARACTER ============ -->
<g>
<!-- points -->
<g fill="#a5a5cc" stroke="#8888b0" stroke-width="0.5">
<rect x="681.5" y="95" width="5.5" height="5.5"/>
<rect x="558.2" y="146.3" width="5.5" height="5.5"/>
<rect x="434.8" y="197.5" width="5.5" height="5.5"/>
<rect x="721" y="191.2" width="5.5" height="5.5"/>
<rect x="474.8" y="293.2" width="5.5" height="5.5"/>
<rect x="760.8" y="287.3" width="5.5" height="5.5"/>
<rect x="637.5" y="338" width="5.5" height="5.5"/>
</g>
<rect x="597" y="343.5" width="0.8" height="11" fill="#c8c8d8"/>
<!-- arms -->
<path d="M569 236.5L551 276L550.5 283Q552 287 556 286Q559.5 284 559.5 279L561 276L573.5 243Z" fill="#f6c597" stroke="#2a2a2a" stroke-width="0.6"/>
<path d="M615.5 236.5L637 271.5L641 271Q645 274 645.5 279Q644 282.5 640 281Q636.5 279 636 275.5L610 241.5Z" fill="#f6c597" stroke="#2a2a2a" stroke-width="0.6"/>
<!-- legs -->
<path d="M582 271L574 328.5L585.5 326.5L594 278L596 278L612.5 328L620 324.5L607.5 271Z" fill="#060606"/>
<ellipse cx="580.8" cy="331.5" rx="7.3" ry="3.4" fill="#f2f2f2" stroke="#333" stroke-width="0.6" transform="rotate(8 580.8 331.5)"/>
<ellipse cx="619.3" cy="328" rx="6.8" ry="3.4" fill="#f2f2f2" stroke="#333" stroke-width="0.6" transform="rotate(-12 619.3 328)"/>
<!-- pants top -->
<path d="M574.6 263.5H610.2L607 272.5H578Z" fill="#070707"/>
<!-- shirt -->
<path d="M584.5 217.9Q592 220.5 600.3 217.9L607 221.9Q612 226 615.5 235L609.6 241L610.2 264H574.6L572.7 243L572 238.3L568.7 233.7Q571 226 575.3 223.2Z" fill="#e2573a" stroke="#2a1a10" stroke-width="0.6"/>
<g stroke="#6a1a08" stroke-width="0.8"><path d="M573.5 241.5L580 240M573.8 244.5L581 243M574 247.5L581.5 246M574.2 250.5L582 249M574.4 253.5L582 252M574.6 256.5L582 255M574.8 259.5L581.5 258.2M575 262.5L581 261.5"/></g><path d="M569.5 234.5Q572 238 573 239M615 235.5Q612 239 610 241" stroke="#2a1a10" stroke-width="0.6" fill="none"/>
<path d="M579 224Q583 230 581 238" stroke="#8a2a18" stroke-width="0.6" fill="none"/>
<!-- neck -->
<path d="M593 212.5H599.5V218.5Q596 220.5 593 218.5Z" fill="#f6c597"/>
<!-- face -->
<path d="M581.4 177.8L615.7 175.3Q617 188 616.2 200Q613.5 211 600 212.8Q588 213.5 580 205.5Q576.5 202 576 197.8Q573.2 195 574.5 190.5Q576.5 187.3 580.3 187.5Z" fill="#f6c597" stroke="#2a2a2a" stroke-width="0.6"/>
<!-- hair -->
<path d="M566.4 181.8Q567.5 171.5 574 166.5Q581.4 162.5 594.2 162Q607.1 163.2 614.5 165.2Q617.7 165 619.9 162.3Q619.8 166 618.3 167.8Q621 168.3 623.1 168.4Q619.3 172.5 615.7 175.5L581.4 178L580.3 187.5Q576.5 186.8 574.5 190.5Q573.4 195 576 197.8L574 201.2Q567.5 195 566.4 181.8Z" fill="#050505"/>
<circle cx="591" cy="193" r="1.7" fill="#111"/><circle cx="611.9" cy="193" r="1.7" fill="#111"/>
<path d="M589 189.8L593.2 189.6M609.8 189.6L614.6 189.9" stroke="#6a4a30" stroke-width="0.6"/>
<path d="M594.2 203.5Q600 205.5 606 203.7" fill="none" stroke="#4a3020" stroke-width="0.8"/>
<!-- anchor -->
<circle cx="592.4" cy="271.3" r="2.8" fill="none" stroke="#8a8ab0" stroke-width="1"/>
<path d="M592.4 265.5V277M586.8 271.3H598" stroke="#8a8ab0" stroke-width="0.9"/>
</g>

</g>
</svg>
</body></html>
